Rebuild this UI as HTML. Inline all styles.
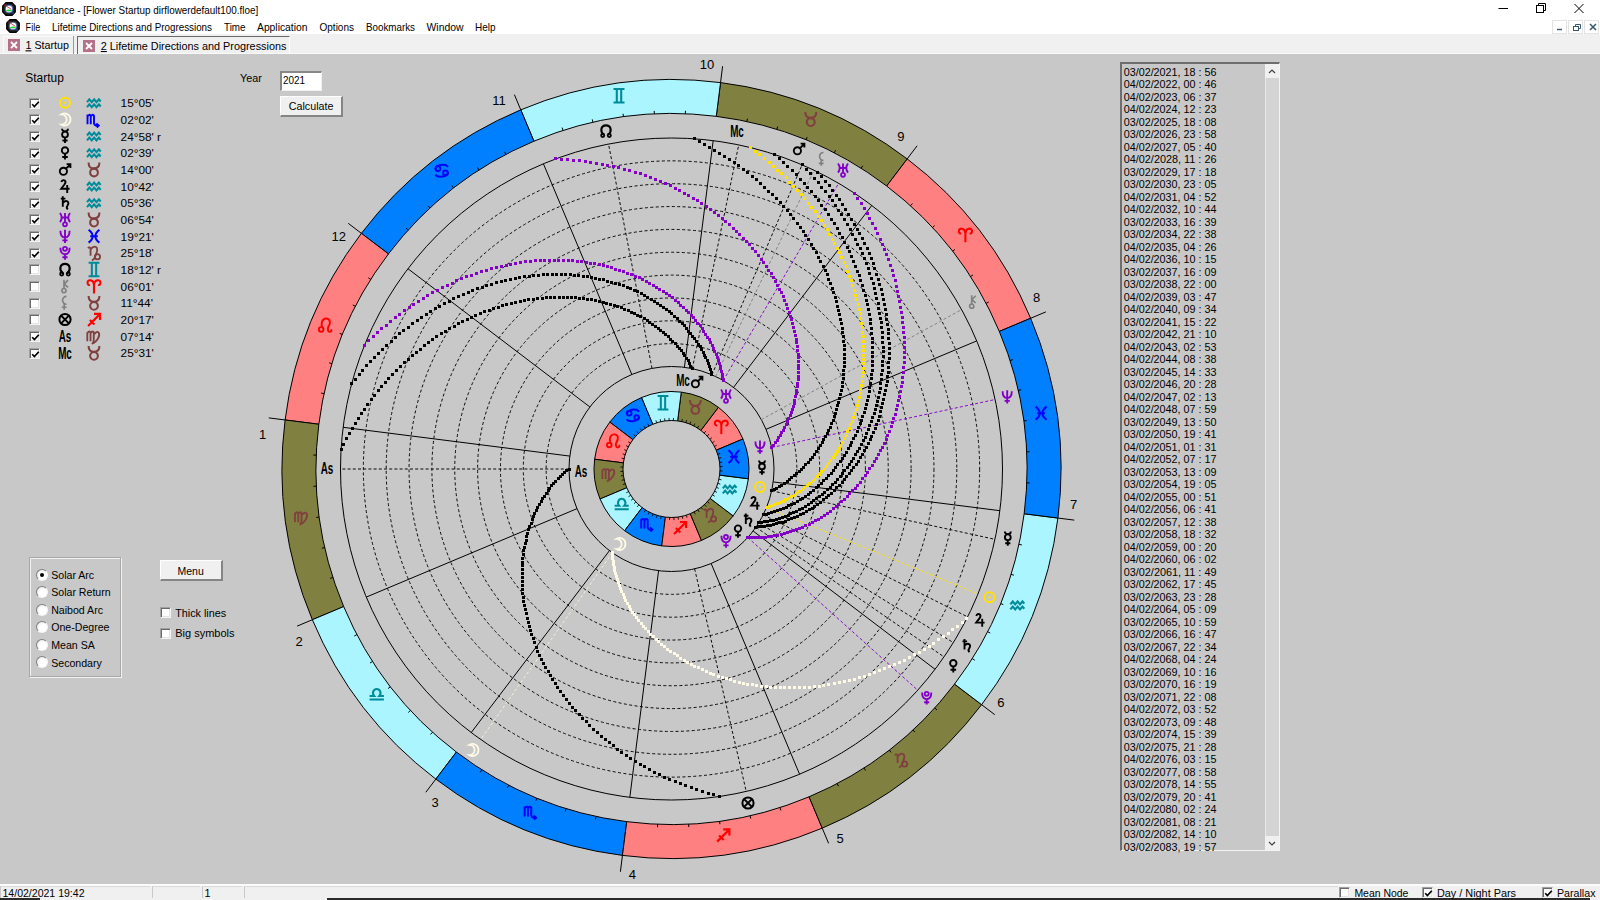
<!DOCTYPE html>
<html><head><meta charset="utf-8"><title>Planetdance</title>
<style>
*{box-sizing:border-box}
html,body{margin:0;padding:0;width:1600px;height:900px;overflow:hidden;background:#c8c8c8;font-family:"Liberation Sans",sans-serif;color:#000}
.abs{position:absolute;white-space:pre}
.cb{position:absolute;width:11px;height:11px;background:#fff;border-top:1px solid #a0a0a0;border-left:1px solid #a0a0a0;border-right:1px solid #f4f4f4;border-bottom:1px solid #f4f4f4;box-shadow:inset 1px 1px 0 #6a6a6a, inset -1px -1px 0 #e3e3e3}
.btn{position:absolute;background:#f0f0f0;border-top:1px solid #fff;border-left:1px solid #fff;border-right:2px solid #858585;border-bottom:2px solid #858585}
.radio{position:absolute;width:12px;height:12px;border-radius:50%;background:radial-gradient(circle at 60% 60%,#fff 0,#fff 40%,#dcdcdc 100%);border-top:1px solid #808080;border-left:1px solid #808080;border-right:1px solid #f8f8f8;border-bottom:1px solid #f8f8f8}
.tabx{position:absolute;width:12px;height:12px;background:#b5708a}
svg text{font-family:"Liberation Sans",sans-serif}
</style></head><body>

<div class="abs" style="left:0;top:0;width:1600px;height:34px;background:#fff"></div>
<div class="abs" style="left:0;top:34px;width:1600px;height:20px;background:#f0f0f0;border-bottom:1px solid #fafafa"></div>
<svg class="abs" style="left:2px;top:2px" width="14" height="14" viewBox="0 0 14 14"><polygon points="4,0.8 10,0.8 13.2,4 13.2,10 10,13.2 4,13.2 0.8,10 0.8,4" fill="#222" stroke="#000" stroke-width="1.4"/><circle cx="7" cy="7" r="3.9" fill="#fff" stroke="#1a4a9a" stroke-width="0.8"/><path d="M3.8,8.6 Q7,6.4 10.2,8.6 Q7,10.6 3.8,8.6 Z" fill="#2bd43b"/><path d="M4.6,4.2 L9.4,7.4" stroke="#d33" stroke-width="0.9"/><circle cx="3" cy="3" r="0.7" fill="#e22"/><circle cx="11" cy="11" r="0.7" fill="#36f"/></svg>
<svg class="abs" style="left:1490px;top:0" width="110" height="17"><path d="M8.5,8.5 H18" stroke="#000" stroke-width="1"/><rect x="46.5" y="5.5" width="7" height="7" fill="none" stroke="#000"/><path d="M48.5,5.5 V3.5 H55.5 V10.5 H53.5" fill="none" stroke="#000"/><path d="M84.5,4 L93.5,13 M93.5,4 L84.5,13" stroke="#000" stroke-width="1"/></svg>
<svg class="abs" style="left:6px;top:19px" width="14" height="14" viewBox="0 0 14 14"><polygon points="4,0.8 10,0.8 13.2,4 13.2,10 10,13.2 4,13.2 0.8,10 0.8,4" fill="#222" stroke="#000" stroke-width="1.4"/><circle cx="7" cy="7" r="3.9" fill="#fff" stroke="#1a4a9a" stroke-width="0.8"/><path d="M3.8,8.6 Q7,6.4 10.2,8.6 Q7,10.6 3.8,8.6 Z" fill="#2bd43b"/><path d="M4.6,4.2 L9.4,7.4" stroke="#d33" stroke-width="0.9"/><circle cx="3" cy="3" r="0.7" fill="#e22"/><circle cx="11" cy="11" r="0.7" fill="#36f"/></svg>
<div class="abs" style="left:1552px;top:20px;width:15px;height:14px;border:1px solid #e3e3e3;background:#fff"></div>
<div class="abs" style="left:1568px;top:20px;width:15px;height:14px;border:1px solid #e3e3e3;background:#fff"></div>
<div class="abs" style="left:1584px;top:20px;width:15px;height:14px;border:1px solid #e3e3e3;background:#fff"></div>
<svg class="abs" style="left:1552px;top:20px" width="48" height="14"><path d="M5,9.5 H10" stroke="#36596e" stroke-width="1.4"/><rect x="21.5" y="6.5" width="5" height="4" fill="none" stroke="#36596e"/><path d="M23.5,6.5 V4.5 H28.5 V8.5 H26.5" fill="none" stroke="#36596e"/><path d="M38,4 L44,10 M44,4 L38,10" stroke="#36596e" stroke-width="1.5"/></svg>
<div class="abs" style="left:3px;top:36px;width:70px;height:17px;border-left:1px solid #fbfbfb;border-top:1px solid #fbfbfb"></div>
<div class="abs" style="left:73px;top:36px;width:1px;height:18px;background:#9a9a9a"></div>
<div class="abs" style="left:77px;top:36px;width:213px;height:18px;border-left:1px solid #6a6a6a;border-top:1px solid #6a6a6a;border-right:1px solid #fff"></div>
<div class="tabx" style="left:8px;top:39px"><svg width="12" height="12" style="position:absolute;left:0;top:0"><path d="M3,3 L9,9 M9,3 L3,9" stroke="#fff" stroke-width="1.8"/></svg></div>
<div class="tabx" style="left:83px;top:40px"><svg width="12" height="12" style="position:absolute;left:0;top:0"><path d="M3,3 L9,9 M9,3 L3,9" stroke="#fff" stroke-width="1.8"/></svg></div>
<div class="cb" style="left:29px;top:98px"><svg width="9" height="9" viewBox="0 0 9 9" style="position:absolute;left:1px;top:1px"><path d="M1.2,4.2 L3.4,6.6 L7.8,1.8" fill="none" stroke="#000" stroke-width="1.7"/></svg></div>
<div class="cb" style="left:29px;top:114px"><svg width="9" height="9" viewBox="0 0 9 9" style="position:absolute;left:1px;top:1px"><path d="M1.2,4.2 L3.4,6.6 L7.8,1.8" fill="none" stroke="#000" stroke-width="1.7"/></svg></div>
<div class="cb" style="left:29px;top:131px"><svg width="9" height="9" viewBox="0 0 9 9" style="position:absolute;left:1px;top:1px"><path d="M1.2,4.2 L3.4,6.6 L7.8,1.8" fill="none" stroke="#000" stroke-width="1.7"/></svg></div>
<div class="cb" style="left:29px;top:148px"><svg width="9" height="9" viewBox="0 0 9 9" style="position:absolute;left:1px;top:1px"><path d="M1.2,4.2 L3.4,6.6 L7.8,1.8" fill="none" stroke="#000" stroke-width="1.7"/></svg></div>
<div class="cb" style="left:29px;top:164px"><svg width="9" height="9" viewBox="0 0 9 9" style="position:absolute;left:1px;top:1px"><path d="M1.2,4.2 L3.4,6.6 L7.8,1.8" fill="none" stroke="#000" stroke-width="1.7"/></svg></div>
<div class="cb" style="left:29px;top:181px"><svg width="9" height="9" viewBox="0 0 9 9" style="position:absolute;left:1px;top:1px"><path d="M1.2,4.2 L3.4,6.6 L7.8,1.8" fill="none" stroke="#000" stroke-width="1.7"/></svg></div>
<div class="cb" style="left:29px;top:198px"><svg width="9" height="9" viewBox="0 0 9 9" style="position:absolute;left:1px;top:1px"><path d="M1.2,4.2 L3.4,6.6 L7.8,1.8" fill="none" stroke="#000" stroke-width="1.7"/></svg></div>
<div class="cb" style="left:29px;top:214px"><svg width="9" height="9" viewBox="0 0 9 9" style="position:absolute;left:1px;top:1px"><path d="M1.2,4.2 L3.4,6.6 L7.8,1.8" fill="none" stroke="#000" stroke-width="1.7"/></svg></div>
<div class="cb" style="left:29px;top:231px"><svg width="9" height="9" viewBox="0 0 9 9" style="position:absolute;left:1px;top:1px"><path d="M1.2,4.2 L3.4,6.6 L7.8,1.8" fill="none" stroke="#000" stroke-width="1.7"/></svg></div>
<div class="cb" style="left:29px;top:248px"><svg width="9" height="9" viewBox="0 0 9 9" style="position:absolute;left:1px;top:1px"><path d="M1.2,4.2 L3.4,6.6 L7.8,1.8" fill="none" stroke="#000" stroke-width="1.7"/></svg></div>
<div class="cb" style="left:29px;top:264px"></div>
<div class="cb" style="left:29px;top:281px"></div>
<div class="cb" style="left:29px;top:298px"></div>
<div class="cb" style="left:29px;top:314px"></div>
<div class="cb" style="left:29px;top:331px"><svg width="9" height="9" viewBox="0 0 9 9" style="position:absolute;left:1px;top:1px"><path d="M1.2,4.2 L3.4,6.6 L7.8,1.8" fill="none" stroke="#000" stroke-width="1.7"/></svg></div>
<div class="cb" style="left:29px;top:348px"><svg width="9" height="9" viewBox="0 0 9 9" style="position:absolute;left:1px;top:1px"><path d="M1.2,4.2 L3.4,6.6 L7.8,1.8" fill="none" stroke="#000" stroke-width="1.7"/></svg></div>
<div class="abs" style="left:280px;top:71px;width:42px;height:20px;background:#fff;border-top:2px solid #888;border-left:2px solid #888;border-right:1px solid #f0f0f0;border-bottom:1px solid #f0f0f0"></div>
<div class="btn" style="left:280px;top:96px;width:63px;height:21px"></div>
<div class="abs" style="left:29px;top:557px;width:92px;height:120px;border:1px solid #a8a8a8;box-shadow:1px 1px 0 #f2f2f2, inset 1px 1px 0 #f2f2f2"></div>
<div class="radio" style="left:35.7px;top:568.7px"></div>
<div class="abs" style="left:39.7px;top:572.7px;width:4px;height:4px;border-radius:50%;background:#000"></div>
<div class="radio" style="left:35.7px;top:586.25px"></div>
<div class="radio" style="left:35.7px;top:603.8px"></div>
<div class="radio" style="left:35.7px;top:621.35px"></div>
<div class="radio" style="left:35.7px;top:638.9px"></div>
<div class="radio" style="left:35.7px;top:656.45px"></div>
<div class="btn" style="left:160px;top:560px;width:63px;height:21px"></div>
<div class="cb" style="left:160px;top:607px"></div>
<div class="cb" style="left:160px;top:628px"></div>
<div class="abs" style="left:1120px;top:62px;width:160px;height:789px;border-top:2px solid #6e6e6e;border-left:2px solid #6e6e6e;border-right:1px solid #f4f4f4;border-bottom:1px solid #f4f4f4;overflow:hidden">
<div style="position:absolute;left:143px;top:0;width:14px;height:786px;background:#d4d4d4;border-left:1px solid #e8e8e8"></div>
<div style="position:absolute;left:143px;top:0;width:14px;height:14px;background:#f0f0f0"></div>
<div style="position:absolute;left:143px;top:772px;width:14px;height:14px;background:#f0f0f0"></div>
<svg style="position:absolute;left:143px;top:0" width="14" height="786"><path d="M4,9 L7,6 L10,9" fill="none" stroke="#404040" stroke-width="1.2"/><path d="M4,778 L7,781 L10,778" fill="none" stroke="#404040" stroke-width="1.2"/></svg>
</div>
<div class="abs" style="left:0;top:884px;width:1600px;height:16px;background:#f0f0f0;border-top:2px solid #fbfbfb"></div>
<div class="abs" style="left:0px;top:886px;width:150px;height:12px;border-left:1px solid #c8c8c8;border-top:1px solid #d8d8d8"></div>
<div class="abs" style="left:152px;top:886px;width:48px;height:12px;border-left:1px solid #c8c8c8;border-top:1px solid #d8d8d8"></div>
<div class="abs" style="left:202px;top:886px;width:40px;height:12px;border-left:1px solid #c8c8c8;border-top:1px solid #d8d8d8"></div>
<div class="abs" style="left:244px;top:886px;width:1094px;height:12px;border-left:1px solid #c8c8c8;border-top:1px solid #d8d8d8"></div>
<div class="cb" style="left:1339px;top:887px"></div>
<div class="cb" style="left:1422px;top:887px"><svg width="9" height="9" viewBox="0 0 9 9" style="position:absolute;left:1px;top:1px"><path d="M1.2,4.2 L3.4,6.6 L7.8,1.8" fill="none" stroke="#000" stroke-width="1.7"/></svg></div>
<div class="cb" style="left:1542px;top:887px"><svg width="9" height="9" viewBox="0 0 9 9" style="position:absolute;left:1px;top:1px"><path d="M1.2,4.2 L3.4,6.6 L7.8,1.8" fill="none" stroke="#000" stroke-width="1.7"/></svg></div>
<div class="abs" style="left:0;top:898px;width:40px;height:2px;background:#2b2b2b"></div>
<div class="abs" style="left:327px;top:898px;width:1263px;height:2px;background:#2b2b2b"></div>
<svg class="abs" style="left:0;top:0" width="1600" height="900" viewBox="0 0 1600 900">
<path d="M1030.65,318.27 A389.5,389.5 0 0 0 907.17,158.89 L886.6,185.96 A355.5,355.5 0 0 1 999.3,331.43 Z" fill="#ff8080" stroke="#000" stroke-width="1"/>
<path d="M907.17,158.89 A389.5,389.5 0 0 0 720.54,82.6 L716.26,116.33 A355.5,355.5 0 0 1 886.6,185.96 Z" fill="#808040" stroke="#000" stroke-width="1"/>
<path d="M720.54,82.6 A389.5,389.5 0 0 0 520.77,109.85 L533.93,141.2 A355.5,355.5 0 0 1 716.26,116.33 Z" fill="#aaf5ff" stroke="#000" stroke-width="1"/>
<path d="M520.77,109.85 A389.5,389.5 0 0 0 361.39,233.33 L388.46,253.9 A355.5,355.5 0 0 1 533.93,141.2 Z" fill="#0080ff" stroke="#000" stroke-width="1"/>
<path d="M361.39,233.33 A389.5,389.5 0 0 0 285.1,419.96 L318.83,424.24 A355.5,355.5 0 0 1 388.46,253.9 Z" fill="#ff8080" stroke="#000" stroke-width="1"/>
<path d="M285.1,419.96 A389.5,389.5 0 0 0 312.35,619.73 L343.7,606.57 A355.5,355.5 0 0 1 318.83,424.24 Z" fill="#808040" stroke="#000" stroke-width="1"/>
<path d="M312.35,619.73 A389.5,389.5 0 0 0 435.83,779.11 L456.4,752.04 A355.5,355.5 0 0 1 343.7,606.57 Z" fill="#aaf5ff" stroke="#000" stroke-width="1"/>
<path d="M435.83,779.11 A389.5,389.5 0 0 0 622.46,855.4 L626.74,821.67 A355.5,355.5 0 0 1 456.4,752.04 Z" fill="#0080ff" stroke="#000" stroke-width="1"/>
<path d="M622.46,855.4 A389.5,389.5 0 0 0 822.23,828.15 L809.07,796.8 A355.5,355.5 0 0 1 626.74,821.67 Z" fill="#ff8080" stroke="#000" stroke-width="1"/>
<path d="M822.23,828.15 A389.5,389.5 0 0 0 981.61,704.67 L954.54,684.1 A355.5,355.5 0 0 1 809.07,796.8 Z" fill="#808040" stroke="#000" stroke-width="1"/>
<path d="M981.61,704.67 A389.5,389.5 0 0 0 1057.9,518.04 L1024.17,513.76 A355.5,355.5 0 0 1 954.54,684.1 Z" fill="#aaf5ff" stroke="#000" stroke-width="1"/>
<path d="M1057.9,518.04 A389.5,389.5 0 0 0 1030.65,318.27 L999.3,331.43 A355.5,355.5 0 0 1 1024.17,513.76 Z" fill="#0080ff" stroke="#000" stroke-width="1"/>
<path d="M986.06,303.38 L988.72,301.98 M970.43,276.6 L972.96,274.97 M952.53,251.27 L954.9,249.44 M932.48,227.61 L934.68,225.57 M910.45,205.78 L912.47,203.56 M861.11,168.29 L862.71,165.75 M834.18,152.91 L835.55,150.24 M806.01,139.93 L807.15,137.15 M776.82,129.46 L777.71,126.59 M746.83,121.57 L747.46,118.64 M685.35,113.77 L685.47,110.77 M654.34,113.91 L654.2,110.92 M623.46,116.76 L623.05,113.79 M592.94,122.29 L592.28,119.36 M563.02,130.45 L562.11,127.6 M505.88,154.44 L504.48,151.78 M479.1,170.07 L477.47,167.54 M453.77,187.97 L451.94,185.6 M430.11,208.02 L428.07,205.82 M408.28,230.05 L406.06,228.03 M370.79,279.39 L368.25,277.79 M355.41,306.32 L352.74,304.95 M342.43,334.49 L339.65,333.35 M331.96,363.68 L329.09,362.79 M324.07,393.67 L321.14,393.04 M316.27,455.15 L313.27,455.03 M316.41,486.16 L313.42,486.3 M319.26,517.04 L316.29,517.45 M324.79,547.56 L321.86,548.22 M332.95,577.48 L330.1,578.39 M356.94,634.62 L354.28,636.02 M372.57,661.4 L370.04,663.03 M390.47,686.73 L388.1,688.56 M410.52,710.39 L408.32,712.43 M432.55,732.22 L430.53,734.44 M481.89,769.71 L480.29,772.25 M508.82,785.09 L507.45,787.76 M536.99,798.07 L535.85,800.85 M566.18,808.54 L565.29,811.41 M596.17,816.43 L595.54,819.36 M657.65,824.23 L657.53,827.23 M688.66,824.09 L688.8,827.08 M719.54,821.24 L719.95,824.21 M750.06,815.71 L750.72,818.64 M779.98,807.55 L780.89,810.4 M837.12,783.56 L838.52,786.22 M863.9,767.93 L865.53,770.46 M889.23,750.03 L891.06,752.4 M912.89,729.98 L914.93,732.18 M934.72,707.95 L936.94,709.97 M972.21,658.61 L974.75,660.21 M987.59,631.68 L990.26,633.05 M1000.57,603.51 L1003.35,604.65 M1011.04,574.32 L1013.91,575.21 M1018.93,544.33 L1021.86,544.96 M1026.73,482.85 L1029.73,482.97 M1026.59,451.84 L1029.58,451.7 M1023.74,420.96 L1026.71,420.55 M1018.21,390.44 L1021.14,389.78 M1010.05,360.52 L1012.9,359.61" stroke="#000" stroke-width="1"/>
<g transform="translate(965.4,234.7) scale(1.1)" color="#ff0000"><path d="M0,-1.5 C-0.4,-6.2 -6,-6.8 -6,-3.2 C-6,-1.6 -4.8,-0.8 -3.8,-1.2 M0,-1.5 C0.4,-6.2 6,-6.8 6,-3.2 C6,-1.6 4.8,-0.8 3.8,-1.2 M0,-1.5 V6.8" fill="none" stroke="currentColor" stroke-width="1.9"/></g>
<g transform="translate(810.75,119) scale(1.1)" color="#804040"><circle cy="2.8" r="3.6" fill="none" stroke="currentColor" stroke-width="1.9"/><path d="M-5,-6.4 C-5,-2.4 -3.2,-1 0,-1 C3.2,-1 5,-2.4 5,-6.4" fill="none" stroke="currentColor" stroke-width="1.9"/></g>
<g transform="translate(619,95.75) scale(1.1)" color="#008b9b"><path d="M-5,-6.2 H5 M-5,6.2 H5 M-2,-6 V6 M2,-6 V6" fill="none" stroke="currentColor" stroke-width="1.89"/></g>
<g transform="translate(441.7,170.8) scale(1.1)" color="#0000ff"><path d="M-5.8,-1.2 C-5.4,-5.8 3.2,-6.6 5.8,-3.6 M5.8,1.2 C5.4,5.8 -3.2,6.6 -5.8,3.6" fill="none" stroke="currentColor" stroke-width="1.77"/><circle cx="-3.4" cy="-1.9" r="2.1" fill="none" stroke="currentColor" stroke-width="1.77"/><circle cx="3.4" cy="1.9" r="2.1" fill="none" stroke="currentColor" stroke-width="1.77"/></g>
<g transform="translate(325.1,325.7) scale(1.1)" color="#ff0000"><circle cx="-3.6" cy="3.4" r="2.1" fill="none" stroke="currentColor" stroke-width="1.77"/><path d="M-2.2,1.8 C-4.5,-2 -2.5,-6.5 1,-6.5 C4.5,-6.5 5.5,-3 3,1 C2,3 2.5,5.8 4.5,5.6 C5.8,5.4 6,4.2 5.4,3.4" fill="none" stroke="currentColor" stroke-width="1.77"/></g>
<g transform="translate(301.75,517) scale(1.1)" color="#804040"><path d="M-6.2,-3.6 V4.8 M-6.2,-2.6 Q-4.8,-5.4 -3.2,-3.6 V4.8 M-3.2,-2.6 Q-1.8,-5.4 -0.2,-3.6 V3.4 Q-0.2,6.2 -2,7.2 M-0.2,-1.4 Q2.6,-5.4 4.4,-3.2 Q5.6,-1 3.6,2.4 Q2,5 -0.6,6.4" fill="none" stroke="currentColor" stroke-width="1.7"/></g>
<g transform="translate(376.75,694) scale(1.1)" color="#008b9b"><path d="M-6.5,5 H6.5 M-6.5,1.8 H-2.4 C-4.6,-0.6 -3,-4.6 0,-4.6 C3,-4.6 4.6,-0.6 2.4,1.8 H6.5" fill="none" stroke="currentColor" stroke-width="1.89"/></g>
<g transform="translate(531.25,811.5) scale(1.1)" color="#0000ff"><path d="M-6,-4.5 V4.5 M-6,-2.6 Q-4.5,-5.6 -3,-3.4 V4.5 M-3,-2.6 Q-1.5,-5.6 0,-3.4 V3.5 Q0.4,6 3.6,5.6 M2.2,3.6 L4.4,5.6 L2.6,7.4" fill="none" stroke="currentColor" stroke-width="1.77"/></g>
<g transform="translate(723.25,835) scale(1.1)" color="#ff0000"><path d="M-5.5,6 L5.5,-5 M0,-5.2 H5.6 V0.4 M-3.8,0.4 L0.4,4.6" fill="none" stroke="currentColor" stroke-width="2.01"/></g>
<g transform="translate(901.1,760) scale(1.1)" color="#804040"><path d="M-5.6,-4.2 Q-4.4,-6 -3.2,-4.2 V2.8 M-3.2,-3 Q-1,-6.4 1.6,-5.6 Q3.6,-4.8 2.6,-0.8 L0.8,4.2 Q0,6.4 -2,6.9" fill="none" stroke="currentColor" stroke-width="1.7"/><circle cx="3.2" cy="3.6" r="2.4" fill="none" stroke="currentColor" stroke-width="1.7"/></g>
<g transform="translate(1017.5,605) scale(1.1)" color="#008b9b"><path d="M-6.5,-0.6 l2.2,-2.6 l2.2,2.6 l2.2,-2.6 l2.2,2.6 l2.2,-2.6 l1.7,2 M-6.5,4 l2.2,-2.6 l2.2,2.6 l2.2,-2.6 l2.2,2.6 l2.2,-2.6 l1.7,2" fill="none" stroke="currentColor" stroke-width="1.89"/></g>
<g transform="translate(1041.1,413.2) scale(1.1)" color="#0000ff"><path d="M-5,-6 Q2.6,0 -5,6 M5,-6 Q-2.6,0 5,6 M-3.5,0 H3.5" fill="none" stroke="currentColor" stroke-width="1.89"/></g>
<text x="262.7" y="438.5" font-size="13" text-anchor="middle" fill="#000">1</text>
<text x="299.2" y="645.6" font-size="13" text-anchor="middle" fill="#000">2</text>
<text x="435.2" y="806.9" font-size="13" text-anchor="middle" fill="#000">3</text>
<text x="632.3" y="879" font-size="13" text-anchor="middle" fill="#000">4</text>
<text x="840.2" y="842.5" font-size="13" text-anchor="middle" fill="#000">5</text>
<text x="1000.8" y="706.6" font-size="13" text-anchor="middle" fill="#000">6</text>
<text x="1073.5" y="509" font-size="13" text-anchor="middle" fill="#000">7</text>
<text x="1036.6" y="301.5" font-size="13" text-anchor="middle" fill="#000">8</text>
<text x="900.8" y="140.6" font-size="13" text-anchor="middle" fill="#000">9</text>
<text x="707.1" y="68.6" font-size="13" text-anchor="middle" fill="#000">10</text>
<text x="499" y="104.9" font-size="13" text-anchor="middle" fill="#000">11</text>
<text x="338.7" y="240.8" font-size="13" text-anchor="middle" fill="#000">12</text>
<path d="M285.1,419.96 L268.73,417.88 M312.35,619.73 L297.13,626.11 M435.83,779.11 L425.84,792.25 M622.46,855.4 L620.38,871.77 M822.23,828.15 L828.61,843.37 M981.61,704.67 L994.75,714.66 M1057.9,518.04 L1074.27,520.12 M1030.65,318.27 L1045.87,311.89 M907.17,158.89 L917.16,145.75 M720.54,82.6 L722.62,66.23 M520.77,109.85 L514.39,94.63 M361.39,233.33 L348.25,223.34" stroke="#000" stroke-width="1"/>
<circle cx="671.5" cy="469.0" r="331.0" fill="none" stroke="#000" stroke-width="1"/>
<circle cx="671.5" cy="469.0" r="102.5" fill="none" stroke="#000" stroke-width="1"/>
<circle cx="671.5" cy="469.0" r="125.35" fill="none" stroke="#000" stroke-width="0.95" stroke-dasharray="3,2.4"/>
<circle cx="671.5" cy="469.0" r="148.2" fill="none" stroke="#000" stroke-width="0.95" stroke-dasharray="3,2.4"/>
<circle cx="671.5" cy="469.0" r="171.05" fill="none" stroke="#000" stroke-width="0.95" stroke-dasharray="3,2.4"/>
<circle cx="671.5" cy="469.0" r="193.9" fill="none" stroke="#000" stroke-width="0.95" stroke-dasharray="3,2.4"/>
<circle cx="671.5" cy="469.0" r="216.75" fill="none" stroke="#000" stroke-width="0.95" stroke-dasharray="3,2.4"/>
<circle cx="671.5" cy="469.0" r="239.6" fill="none" stroke="#000" stroke-width="0.95" stroke-dasharray="3,2.4"/>
<circle cx="671.5" cy="469.0" r="262.45" fill="none" stroke="#000" stroke-width="0.95" stroke-dasharray="3,2.4"/>
<circle cx="671.5" cy="469.0" r="285.3" fill="none" stroke="#000" stroke-width="0.95" stroke-dasharray="3,2.4"/>
<circle cx="671.5" cy="469.0" r="308.15" fill="none" stroke="#000" stroke-width="0.95" stroke-dasharray="3,2.4"/>
<path d="M766.01,429.33 L976.71,340.91 M733.52,387.39 L871.78,205.46 M684.41,367.32 L713.18,140.63 M631.83,374.49 L543.41,163.79 M589.89,406.98 L407.96,268.72 M569.82,456.09 L343.13,427.32 M576.99,508.67 L366.29,597.09 M609.48,550.61 L471.22,732.54 M658.59,570.68 L629.82,797.37 M711.17,563.51 L799.59,774.21 M753.11,531.02 L935.04,669.28 M773.18,481.91 L999.87,510.68" stroke="#000" stroke-width="1"/>
<path d="M766.44,507.65 L978.07,593.8" stroke="#ffe000" stroke-width="0.95" stroke-dasharray="3,2.2"/>
<path d="M612.42,552.76 L480.7,739.48" stroke="#f4efd8" stroke-width="0.95" stroke-dasharray="3,2.2"/>
<path d="M771.66,490.78 L994.94,539.32" stroke="#000000" stroke-width="0.95" stroke-dasharray="3,2.2"/>
<path d="M755.89,527.18 L944.01,656.88" stroke="#000000" stroke-width="0.95" stroke-dasharray="3,2.2"/>
<path d="M711.93,374.81 L802.07,164.84" stroke="#000000" stroke-width="0.95" stroke-dasharray="3,2.2"/>
<path d="M763.2,514.79 L967.64,616.86" stroke="#000000" stroke-width="0.95" stroke-dasharray="3,2.2"/>
<path d="M758.77,522.76 L953.32,642.6" stroke="#000000" stroke-width="0.95" stroke-dasharray="3,2.2"/>
<path d="M723.27,380.53 L838.66,183.31" stroke="#8400c8" stroke-width="0.95" stroke-dasharray="3,2.2"/>
<path d="M771.72,447.48 L995.13,399.52" stroke="#8400c8" stroke-width="0.95" stroke-dasharray="3,2.2"/>
<path d="M747.75,537.5 L917.74,690.2" stroke="#8400c8" stroke-width="0.95" stroke-dasharray="3,2.2"/>
<path d="M652,368.37 L608.53,144.04" stroke="#000000" stroke-width="0.95" stroke-dasharray="3,2.2"/>
<path d="M761.34,419.65 L961.6,309.62" stroke="#808080" stroke-width="0.95" stroke-dasharray="3,2.2"/>
<path d="M715.63,376.48 L814,170.24" stroke="#808080" stroke-width="0.95" stroke-dasharray="3,2.2"/>
<path d="M694.64,568.85 L746.24,791.45" stroke="#000000" stroke-width="0.95" stroke-dasharray="3,2.2"/>
<path d="M569,469 L340.5,469" stroke="#000000" stroke-width="0.95" stroke-dasharray="3,2.2"/>
<path d="M692.31,368.64 L738.72,144.9" stroke="#000000" stroke-width="0.95" stroke-dasharray="3,2.2"/>
<path d="M742.96,439.01 A77.5,77.5 0 0 0 718.39,407.3 L700.85,430.39 A48.5,48.5 0 0 1 716.22,450.23 Z" fill="#ff8080" stroke="#000" stroke-width="1"/>
<g transform="translate(721.3,426.62) scale(1.08)" color="#ff0000"><path d="M0,-1.5 C-0.4,-6.2 -6,-6.8 -6,-3.2 C-6,-1.6 -4.8,-0.8 -3.8,-1.2 M0,-1.5 C0.4,-6.2 6,-6.8 6,-3.2 C6,-1.6 4.8,-0.8 3.8,-1.2 M0,-1.5 V6.8" fill="none" stroke="currentColor" stroke-width="1.9"/></g>
<path d="M718.39,407.3 A77.5,77.5 0 0 0 681.26,392.12 L677.61,420.89 A48.5,48.5 0 0 1 700.85,430.39 Z" fill="#808040" stroke="#000" stroke-width="1"/>
<g transform="translate(695.34,406.88) scale(1.08)" color="#804040"><circle cy="2.8" r="3.6" fill="none" stroke="currentColor" stroke-width="1.9"/><path d="M-5,-6.4 C-5,-2.4 -3.2,-1 0,-1 C3.2,-1 5,-2.4 5,-6.4" fill="none" stroke="currentColor" stroke-width="1.9"/></g>
<path d="M681.26,392.12 A77.5,77.5 0 0 0 641.51,397.54 L652.73,424.28 A48.5,48.5 0 0 1 677.61,420.89 Z" fill="#aaf5ff" stroke="#000" stroke-width="1"/>
<g transform="translate(662.99,402.78) scale(1.08)" color="#008b9b"><path d="M-5,-6.2 H5 M-5,6.2 H5 M-2,-6 V6 M2,-6 V6" fill="none" stroke="currentColor" stroke-width="1.89"/></g>
<path d="M641.51,397.54 A77.5,77.5 0 0 0 609.8,422.11 L632.89,439.65 A48.5,48.5 0 0 1 652.73,424.28 Z" fill="#0080ff" stroke="#000" stroke-width="1"/>
<g transform="translate(632.92,415.4) scale(1.08)" color="#0000ff"><path d="M-5.8,-1.2 C-5.4,-5.8 3.2,-6.6 5.8,-3.6 M5.8,1.2 C5.4,5.8 -3.2,6.6 -5.8,3.6" fill="none" stroke="currentColor" stroke-width="1.77"/><circle cx="-3.4" cy="-1.9" r="2.1" fill="none" stroke="currentColor" stroke-width="1.77"/><circle cx="3.4" cy="1.9" r="2.1" fill="none" stroke="currentColor" stroke-width="1.77"/></g>
<path d="M609.8,422.11 A77.5,77.5 0 0 0 594.62,459.24 L623.39,462.89 A48.5,48.5 0 0 1 632.89,439.65 Z" fill="#ff8080" stroke="#000" stroke-width="1"/>
<g transform="translate(613.18,441.36) scale(1.08)" color="#ff0000"><circle cx="-3.6" cy="3.4" r="2.1" fill="none" stroke="currentColor" stroke-width="1.77"/><path d="M-2.2,1.8 C-4.5,-2 -2.5,-6.5 1,-6.5 C4.5,-6.5 5.5,-3 3,1 C2,3 2.5,5.8 4.5,5.6 C5.8,5.4 6,4.2 5.4,3.4" fill="none" stroke="currentColor" stroke-width="1.77"/></g>
<path d="M594.62,459.24 A77.5,77.5 0 0 0 600.04,498.99 L626.78,487.77 A48.5,48.5 0 0 1 623.39,462.89 Z" fill="#808040" stroke="#000" stroke-width="1"/>
<g transform="translate(609.08,473.71) scale(1.08)" color="#804040"><path d="M-6.2,-3.6 V4.8 M-6.2,-2.6 Q-4.8,-5.4 -3.2,-3.6 V4.8 M-3.2,-2.6 Q-1.8,-5.4 -0.2,-3.6 V3.4 Q-0.2,6.2 -2,7.2 M-0.2,-1.4 Q2.6,-5.4 4.4,-3.2 Q5.6,-1 3.6,2.4 Q2,5 -0.6,6.4" fill="none" stroke="currentColor" stroke-width="1.7"/></g>
<path d="M600.04,498.99 A77.5,77.5 0 0 0 624.61,530.7 L642.15,507.61 A48.5,48.5 0 0 1 626.78,487.77 Z" fill="#aaf5ff" stroke="#000" stroke-width="1"/>
<g transform="translate(621.7,503.78) scale(1.08)" color="#008b9b"><path d="M-6.5,5 H6.5 M-6.5,1.8 H-2.4 C-4.6,-0.6 -3,-4.6 0,-4.6 C3,-4.6 4.6,-0.6 2.4,1.8 H6.5" fill="none" stroke="currentColor" stroke-width="1.89"/></g>
<path d="M624.61,530.7 A77.5,77.5 0 0 0 661.74,545.88 L665.39,517.11 A48.5,48.5 0 0 1 642.15,507.61 Z" fill="#0080ff" stroke="#000" stroke-width="1"/>
<g transform="translate(647.66,523.52) scale(1.08)" color="#0000ff"><path d="M-6,-4.5 V4.5 M-6,-2.6 Q-4.5,-5.6 -3,-3.4 V4.5 M-3,-2.6 Q-1.5,-5.6 0,-3.4 V3.5 Q0.4,6 3.6,5.6 M2.2,3.6 L4.4,5.6 L2.6,7.4" fill="none" stroke="currentColor" stroke-width="1.77"/></g>
<path d="M661.74,545.88 A77.5,77.5 0 0 0 701.49,540.46 L690.27,513.72 A48.5,48.5 0 0 1 665.39,517.11 Z" fill="#ff8080" stroke="#000" stroke-width="1"/>
<g transform="translate(680.01,527.62) scale(1.08)" color="#ff0000"><path d="M-5.5,6 L5.5,-5 M0,-5.2 H5.6 V0.4 M-3.8,0.4 L0.4,4.6" fill="none" stroke="currentColor" stroke-width="2.01"/></g>
<path d="M701.49,540.46 A77.5,77.5 0 0 0 733.2,515.89 L710.11,498.35 A48.5,48.5 0 0 1 690.27,513.72 Z" fill="#808040" stroke="#000" stroke-width="1"/>
<g transform="translate(710.08,515) scale(1.08)" color="#804040"><path d="M-5.6,-4.2 Q-4.4,-6 -3.2,-4.2 V2.8 M-3.2,-3 Q-1,-6.4 1.6,-5.6 Q3.6,-4.8 2.6,-0.8 L0.8,4.2 Q0,6.4 -2,6.9" fill="none" stroke="currentColor" stroke-width="1.7"/><circle cx="3.2" cy="3.6" r="2.4" fill="none" stroke="currentColor" stroke-width="1.7"/></g>
<path d="M733.2,515.89 A77.5,77.5 0 0 0 748.38,478.76 L719.61,475.11 A48.5,48.5 0 0 1 710.11,498.35 Z" fill="#aaf5ff" stroke="#000" stroke-width="1"/>
<g transform="translate(729.82,489.04) scale(1.08)" color="#008b9b"><path d="M-6.5,-0.6 l2.2,-2.6 l2.2,2.6 l2.2,-2.6 l2.2,2.6 l2.2,-2.6 l1.7,2 M-6.5,4 l2.2,-2.6 l2.2,2.6 l2.2,-2.6 l2.2,2.6 l2.2,-2.6 l1.7,2" fill="none" stroke="currentColor" stroke-width="1.89"/></g>
<path d="M748.38,478.76 A77.5,77.5 0 0 0 742.96,439.01 L716.22,450.23 A48.5,48.5 0 0 1 719.61,475.11 Z" fill="#0080ff" stroke="#000" stroke-width="1"/>
<g transform="translate(733.92,456.69) scale(1.08)" color="#0000ff"><path d="M-5,-6 Q2.6,0 -5,6 M5,-6 Q-2.6,0 5,6 M-3.5,0 H3.5" fill="none" stroke="currentColor" stroke-width="1.89"/></g>
<path d="M714.42,446.41 L716.72,445.19 M712.28,442.75 L714.47,441.34 M709.84,439.3 L711.9,437.7 M707.11,436.07 L709.01,434.3 M704.1,433.09 L705.85,431.16 M697.37,427.97 L698.76,425.78 M693.69,425.88 L694.88,423.56 M689.85,424.11 L690.84,421.7 M685.87,422.68 L686.64,420.19 M681.78,421.6 L682.33,419.06 M673.39,420.54 L673.49,417.94 M669.16,420.56 L669.03,417.96 M664.95,420.94 L664.59,418.37 M660.78,421.7 L660.21,419.16 M656.7,422.81 L655.91,420.34 M648.91,426.08 L647.69,423.78 M645.25,428.22 L643.84,426.03 M641.8,430.66 L640.2,428.6 M638.57,433.39 L636.8,431.49 M635.59,436.4 L633.66,434.65 M630.47,443.13 L628.28,441.74 M628.38,446.81 L626.06,445.62 M626.61,450.65 L624.2,449.66 M625.18,454.63 L622.69,453.86 M624.1,458.72 L621.56,458.17 M623.04,467.11 L620.44,467.01 M623.06,471.34 L620.46,471.47 M623.44,475.55 L620.87,475.91 M624.2,479.72 L621.66,480.29 M625.31,483.8 L622.84,484.59 M628.58,491.59 L626.28,492.81 M630.72,495.25 L628.53,496.66 M633.16,498.7 L631.1,500.3 M635.89,501.93 L633.99,503.7 M638.9,504.91 L637.15,506.84 M645.63,510.03 L644.24,512.22 M649.31,512.12 L648.12,514.44 M653.15,513.89 L652.16,516.3 M657.13,515.32 L656.36,517.81 M661.22,516.4 L660.67,518.94 M669.61,517.46 L669.51,520.06 M673.84,517.44 L673.97,520.04 M678.05,517.06 L678.41,519.63 M682.22,516.3 L682.79,518.84 M686.3,515.19 L687.09,517.66 M694.09,511.92 L695.31,514.22 M697.75,509.78 L699.16,511.97 M701.2,507.34 L702.8,509.4 M704.43,504.61 L706.2,506.51 M707.41,501.6 L709.34,503.35 M712.53,494.87 L714.72,496.26 M714.62,491.19 L716.94,492.38 M716.39,487.35 L718.8,488.34 M717.82,483.37 L720.31,484.14 M718.9,479.28 L721.44,479.83 M719.96,470.89 L722.56,470.99 M719.94,466.66 L722.54,466.53 M719.56,462.45 L722.13,462.09 M718.8,458.28 L721.34,457.71 M717.69,454.2 L720.16,453.41" stroke="#000" stroke-width="0.85"/>
<g transform="translate(989.6,597.3)" color="#ffe000"><circle r="5" fill="none" stroke="currentColor" stroke-width="2.01"/><circle r="1.2" fill="currentColor"/></g>
<g transform="translate(473,750)" color="#fffae6"><path d="M-3.5,-5.2 A6,6 0 1 1 -3.5,5.2 A4.6,4.6 0 0 0 -3.5,-5.2 Z" fill="none" stroke="currentColor" stroke-width="1.77"/></g>
<g transform="translate(1007.8,538.9)" color="#000000"><path d="M-3,-7.4 A3,2.6 0 0 0 3,-7.4 M0,1.3 V6.8 M-2.6,4.3 H2.6" fill="none" stroke="currentColor" stroke-width="1.89"/><circle cy="-1.6" r="2.9" fill="none" stroke="currentColor" stroke-width="1.89"/></g>
<g transform="translate(953.3,665.6)" color="#000000"><circle cy="-2.4" r="3.2" fill="none" stroke="currentColor" stroke-width="1.89"/><path d="M0,0.8 V6.8 M-2.8,4.2 H2.8" fill="none" stroke="currentColor" stroke-width="1.89"/></g>
<g transform="translate(799,149)" color="#000000"><circle cx="-1.6" cy="1.8" r="3.6" fill="none" stroke="currentColor" stroke-width="1.89"/><path d="M1,-0.8 L5.2,-5 M1.6,-5.4 H5.4 V-1.6" fill="none" stroke="currentColor" stroke-width="1.89"/></g>
<g transform="translate(980,620)" color="#000000"><path d="M-3.8,-4.2 Q-2.5,-6.8 -0.2,-5.6 Q1.4,-4.4 -0.6,-1.6 L-3.8,2.6 H4.6 M2.2,-1.2 V6.8" fill="none" stroke="currentColor" stroke-width="1.89"/></g>
<g transform="translate(966.7,645.6)" color="#000000"><path d="M-2.2,-6.5 V4 M-4.2,-4.2 H0.4 M-2.2,0 Q0.5,-3 2.8,-1.2 Q4.2,0.5 2.4,3 Q1,4.8 2.8,6.6" fill="none" stroke="currentColor" stroke-width="1.89"/></g>
<g transform="translate(843,170)" color="#8400c8"><path d="M-5,-6.5 Q-1.6,-2 -5,2.6 M5,-6.5 Q1.6,-2 5,2.6 M-3.2,-2 H3.2 M0,-6.5 V2.8" fill="none" stroke="currentColor" stroke-width="1.89"/><circle cy="4.8" r="2" fill="none" stroke="currentColor" stroke-width="1.77"/></g>
<g transform="translate(1007.2,396.7)" color="#8400c8"><path d="M-4.6,-5.5 Q-4.6,1.2 0,1.2 Q4.6,1.2 4.6,-5.5 M0,-6.5 V6.8 M-2.6,4.2 H2.6" fill="none" stroke="currentColor" stroke-width="1.89"/></g>
<g transform="translate(926.7,697.8)" color="#8400c8"><circle cy="-4" r="2" fill="none" stroke="currentColor" stroke-width="1.77"/><path d="M-4.6,-5.2 Q-4.6,1.4 0,1.4 Q4.6,1.4 4.6,-5.2 M0,1.4 V6.8 M-2.6,4.4 H2.6" fill="none" stroke="currentColor" stroke-width="1.89"/></g>
<g transform="translate(606,131)" color="#000000"><path d="M-2.2,3.6 C-6,1 -5.5,-5.6 0,-5.6 C5.5,-5.6 6,1 2.2,3.6" fill="none" stroke="currentColor" stroke-width="2.12"/><circle cx="-3.3" cy="4.6" r="1.6" fill="none" stroke="currentColor" stroke-width="1.77"/><circle cx="3.3" cy="4.6" r="1.6" fill="none" stroke="currentColor" stroke-width="1.77"/></g>
<g transform="translate(972.7,301.8)" color="#808080"><path d="M-1,-6.5 V2.2 M-1,-1.8 L3,-6 M-0.6,-2 L3,1.2" fill="none" stroke="currentColor" stroke-width="1.65"/><circle cx="-1" cy="4.4" r="2.1" fill="none" stroke="currentColor" stroke-width="1.65"/></g>
<g transform="translate(822,159)" color="#808080"><path d="M1.5,-6.5 A3.8,3.8 0 1 0 1.5,1.4 A2.8,2.8 0 0 1 1.5,-6.5 M-0.8,1.2 V6.8 M-3.2,4.4 H1.6" fill="none" stroke="currentColor" stroke-width="1.65"/></g>
<g transform="translate(748,803)" color="#000000"><circle r="5.6" fill="none" stroke="currentColor" stroke-width="2.01"/><path d="M-3.9,-3.9 L3.9,3.9 M3.9,-3.9 L-3.9,3.9" stroke="currentColor" stroke-width="2.01"/></g>
<text x="0" y="0" font-size="17.0" font-weight="bold" text-anchor="middle" transform="translate(327,474.2) scale(0.58,1)" fill="#000">As</text>
<text x="0" y="0" font-size="17.0" font-weight="bold" text-anchor="middle" transform="translate(737,137.2) scale(0.58,1)" fill="#000">Mc</text>
<text x="0" y="0" font-size="17.0" font-weight="bold" text-anchor="middle" transform="translate(683,386.2) scale(0.58,1)" fill="#000">Mc</text>
<g transform="translate(697,382)" color="#000000"><circle cx="-1.6" cy="1.8" r="3.6" fill="none" stroke="currentColor" stroke-width="1.89"/><path d="M1,-0.8 L5.2,-5 M1.6,-5.4 H5.4 V-1.6" fill="none" stroke="currentColor" stroke-width="1.89"/></g>
<g transform="translate(726,396)" color="#8400c8"><path d="M-5,-6.5 Q-1.6,-2 -5,2.6 M5,-6.5 Q1.6,-2 5,2.6 M-3.2,-2 H3.2 M0,-6.5 V2.8" fill="none" stroke="currentColor" stroke-width="1.89"/><circle cy="4.8" r="2" fill="none" stroke="currentColor" stroke-width="1.77"/></g>
<g transform="translate(760,447)" color="#8400c8"><path d="M-4.6,-5.5 Q-4.6,1.2 0,1.2 Q4.6,1.2 4.6,-5.5 M0,-6.5 V6.8 M-2.6,4.2 H2.6" fill="none" stroke="currentColor" stroke-width="1.89"/></g>
<g transform="translate(762,468)" color="#000000"><path d="M-3,-7.4 A3,2.6 0 0 0 3,-7.4 M0,1.3 V6.8 M-2.6,4.3 H2.6" fill="none" stroke="currentColor" stroke-width="1.89"/><circle cy="-1.6" r="2.9" fill="none" stroke="currentColor" stroke-width="1.89"/></g>
<g transform="translate(760,487)" color="#ffe000"><circle r="5" fill="none" stroke="currentColor" stroke-width="2.01"/><circle r="1.2" fill="currentColor"/></g>
<g transform="translate(755,503)" color="#000000"><path d="M-3.8,-4.2 Q-2.5,-6.8 -0.2,-5.6 Q1.4,-4.4 -0.6,-1.6 L-3.8,2.6 H4.6 M2.2,-1.2 V6.8" fill="none" stroke="currentColor" stroke-width="1.89"/></g>
<g transform="translate(748,520)" color="#000000"><path d="M-2.2,-6.5 V4 M-4.2,-4.2 H0.4 M-2.2,0 Q0.5,-3 2.8,-1.2 Q4.2,0.5 2.4,3 Q1,4.8 2.8,6.6" fill="none" stroke="currentColor" stroke-width="1.89"/></g>
<g transform="translate(738,531)" color="#000000"><circle cy="-2.4" r="3.2" fill="none" stroke="currentColor" stroke-width="1.89"/><path d="M0,0.8 V6.8 M-2.8,4.2 H2.8" fill="none" stroke="currentColor" stroke-width="1.89"/></g>
<g transform="translate(726,541)" color="#8400c8"><circle cy="-4" r="2" fill="none" stroke="currentColor" stroke-width="1.77"/><path d="M-4.6,-5.2 Q-4.6,1.4 0,1.4 Q4.6,1.4 4.6,-5.2 M0,1.4 V6.8 M-2.6,4.4 H2.6" fill="none" stroke="currentColor" stroke-width="1.89"/></g>
<g transform="translate(620,544)" color="#fffae6"><path d="M-3.5,-5.2 A6,6 0 1 1 -3.5,5.2 A4.6,4.6 0 0 0 -3.5,-5.2 Z" fill="none" stroke="currentColor" stroke-width="1.77"/></g>
<text x="0" y="0" font-size="17.0" font-weight="bold" text-anchor="middle" transform="translate(581,477.2) scale(0.58,1)" fill="#000">As</text>
<path d="M764.94,506.15h3v3h-3zM767.73,505.3h3v3h-3zM770.53,504.36h3v3h-3zM773.32,503.34h3v3h-3zM776.1,502.23h3v3h-3zM778.88,501.03h3v3h-3zM781.64,499.75h3v3h-3zM784.4,498.38h3v3h-3zM787.14,496.93h3v3h-3zM789.86,495.39h3v3h-3zM792.57,493.77h3v3h-3zM795.25,492.05h3v3h-3zM797.91,490.26h3v3h-3zM800.55,488.38h3v3h-3zM803.15,486.41h3v3h-3zM805.73,484.36h3v3h-3zM808.28,482.23h3v3h-3zM810.79,480.01h3v3h-3zM813.27,477.72h3v3h-3zM815.7,475.34h3v3h-3zM818.1,472.88h3v3h-3zM820.46,470.34h3v3h-3zM822.77,467.72h3v3h-3zM825.04,465.02h3v3h-3zM827.25,462.24h3v3h-3zM829.42,459.39h3v3h-3zM831.53,456.46h3v3h-3zM833.59,453.46h3v3h-3zM835.6,450.38h3v3h-3zM837.54,447.23h3v3h-3zM839.43,444.01h3v3h-3zM841.25,440.72h3v3h-3zM843.01,437.36h3v3h-3zM844.71,433.94h3v3h-3zM846.34,430.44h3v3h-3zM847.9,426.89h3v3h-3zM849.39,423.27h3v3h-3zM850.8,419.58h3v3h-3zM852.15,415.84h3v3h-3zM853.41,412.04h3v3h-3zM854.6,408.18h3v3h-3zM855.71,404.26h3v3h-3zM856.75,400.3h3v3h-3zM857.7,396.27h3v3h-3zM858.56,392.2h3v3h-3zM859.34,388.08h3v3h-3zM860.04,383.91h3v3h-3zM860.65,379.7h3v3h-3zM861.17,375.44h3v3h-3zM861.6,371.14h3v3h-3zM861.94,366.81h3v3h-3zM862.19,362.43h3v3h-3zM862.34,358.02h3v3h-3zM862.4,353.57h3v3h-3zM862.37,349.09h3v3h-3zM862.24,344.58h3v3h-3zM862.01,340.05h3v3h-3zM861.68,335.48h3v3h-3zM861.26,330.9h3v3h-3zM860.73,326.29h3v3h-3zM860.1,321.66h3v3h-3zM859.38,317.02h3v3h-3zM858.54,312.36h3v3h-3zM857.61,307.68h3v3h-3zM856.58,303h3v3h-3zM855.43,298.3h3v3h-3zM854.19,293.6h3v3h-3zM852.84,288.9h3v3h-3zM851.38,284.19h3v3h-3zM849.82,279.48h3v3h-3zM848.15,274.78h3v3h-3zM846.38,270.08h3v3h-3zM844.5,265.39h3v3h-3zM842.51,260.7h3v3h-3zM840.42,256.03h3v3h-3zM838.21,251.37h3v3h-3zM835.9,246.73h3v3h-3zM833.49,242.1h3v3h-3zM830.96,237.5h3v3h-3zM828.33,232.92h3v3h-3zM825.59,228.36h3v3h-3zM822.75,223.84h3v3h-3zM819.8,219.34h3v3h-3zM816.74,214.87h3v3h-3zM813.58,210.44h3v3h-3zM810.31,206.04h3v3h-3zM806.93,201.69h3v3h-3zM803.45,197.37h3v3h-3zM799.87,193.1h3v3h-3zM796.18,188.87h3v3h-3zM792.39,184.7h3v3h-3zM788.49,180.57h3v3h-3zM784.5,176.49h3v3h-3zM780.4,172.47h3v3h-3zM776.2,168.51h3v3h-3zM771.91,164.61h3v3h-3zM767.51,160.77h3v3h-3zM763.01,156.99h3v3h-3zM758.42,153.27h3v3h-3zM753.74,149.63h3v3h-3zM748.95,146.05h3v3h-3z" fill="#ffe000" shape-rendering="crispEdges"/>
<path d="M610.92,551.26h3v3h-3zM611.11,554.17h3v3h-3zM611.39,557.11h3v3h-3zM611.76,560.06h3v3h-3zM612.21,563.02h3v3h-3zM612.75,565.99h3v3h-3zM613.37,568.98h3v3h-3zM614.08,571.97h3v3h-3zM614.88,574.97h3v3h-3zM615.76,577.97h3v3h-3zM616.74,580.97h3v3h-3zM617.8,583.97h3v3h-3zM618.95,586.97h3v3h-3zM620.18,589.96h3v3h-3zM621.51,592.94h3v3h-3zM622.92,595.92h3v3h-3zM624.43,598.88h3v3h-3zM626.02,601.83h3v3h-3zM627.7,604.76h3v3h-3zM629.47,607.67h3v3h-3zM631.32,610.56h3v3h-3zM633.26,613.43h3v3h-3zM635.29,616.28h3v3h-3zM637.41,619.09h3v3h-3zM639.62,621.88h3v3h-3zM641.91,624.63h3v3h-3zM644.28,627.35h3v3h-3zM646.74,630.04h3v3h-3zM649.29,632.69h3v3h-3zM651.91,635.29h3v3h-3zM654.63,637.86h3v3h-3zM657.42,640.38h3v3h-3zM660.29,642.85h3v3h-3zM663.25,645.28h3v3h-3zM666.28,647.65h3v3h-3zM669.4,649.97h3v3h-3zM672.59,652.24h3v3h-3zM675.85,654.45h3v3h-3zM679.2,656.61h3v3h-3zM682.61,658.7h3v3h-3zM686.11,660.73h3v3h-3zM689.67,662.7h3v3h-3zM693.3,664.6h3v3h-3zM697,666.43h3v3h-3zM700.78,668.19h3v3h-3zM704.61,669.89h3v3h-3zM708.52,671.51h3v3h-3zM712.48,673.05h3v3h-3zM716.51,674.52h3v3h-3zM720.6,675.91h3v3h-3zM724.75,677.22h3v3h-3zM728.96,678.45h3v3h-3zM733.22,679.6h3v3h-3zM737.54,680.66h3v3h-3zM741.91,681.64h3v3h-3zM746.34,682.53h3v3h-3zM750.81,683.33h3v3h-3zM755.32,684.04h3v3h-3zM759.89,684.66h3v3h-3zM764.5,685.19h3v3h-3zM769.15,685.62h3v3h-3zM773.84,685.96h3v3h-3zM778.56,686.21h3v3h-3zM783.33,686.35h3v3h-3zM788.13,686.4h3v3h-3zM792.96,686.35h3v3h-3zM797.82,686.2h3v3h-3zM802.7,685.95h3v3h-3zM807.62,685.59h3v3h-3zM812.56,685.13h3v3h-3zM817.52,684.57h3v3h-3zM822.49,683.9h3v3h-3zM827.49,683.13h3v3h-3zM832.5,682.25h3v3h-3zM837.53,681.26h3v3h-3zM842.56,680.17h3v3h-3zM847.61,678.97h3v3h-3zM852.66,677.66h3v3h-3zM857.71,676.24h3v3h-3zM862.77,674.71h3v3h-3zM867.83,673.07h3v3h-3zM872.88,671.32h3v3h-3zM877.93,669.47h3v3h-3zM882.97,667.49h3v3h-3zM888,665.41h3v3h-3zM893.02,663.22h3v3h-3zM898.03,660.92h3v3h-3zM903.02,658.5h3v3h-3zM907.99,655.97h3v3h-3zM912.94,653.33h3v3h-3zM917.86,650.58h3v3h-3zM922.76,647.72h3v3h-3zM927.64,644.75h3v3h-3zM932.48,641.67h3v3h-3zM937.29,638.47h3v3h-3zM942.06,635.17h3v3h-3zM946.79,631.75h3v3h-3zM951.49,628.23h3v3h-3zM956.14,624.59h3v3h-3zM960.75,620.85h3v3h-3zM965.32,617h3v3h-3z" fill="#fffae6" shape-rendering="crispEdges"/>
<path d="M770.16,489.28h3v3h-3zM772.77,487.96h3v3h-3zM775.36,486.56h3v3h-3zM777.93,485.07h3v3h-3zM780.49,483.5h3v3h-3zM783.02,481.85h3v3h-3zM785.52,480.11h3v3h-3zM788,478.29h3v3h-3zM790.45,476.39h3v3h-3zM792.87,474.4h3v3h-3zM795.26,472.34h3v3h-3zM797.61,470.19h3v3h-3zM799.92,467.97h3v3h-3zM802.19,465.66h3v3h-3zM804.42,463.28h3v3h-3zM806.61,460.82h3v3h-3zM808.75,458.28h3v3h-3zM810.85,455.66h3v3h-3zM812.89,452.97h3v3h-3zM814.89,450.21h3v3h-3zM816.83,447.38h3v3h-3zM818.71,444.47h3v3h-3zM820.54,441.49h3v3h-3zM822.31,438.44h3v3h-3zM824.02,435.33h3v3h-3zM825.66,432.15h3v3h-3zM827.24,428.9h3v3h-3zM828.76,425.59h3v3h-3zM830.2,422.21h3v3h-3zM831.58,418.77h3v3h-3zM832.88,415.28h3v3h-3zM834.12,411.72h3v3h-3zM835.27,408.11h3v3h-3zM836.36,404.45h3v3h-3zM837.36,400.73h3v3h-3zM838.29,396.95h3v3h-3zM839.13,393.13h3v3h-3zM839.9,389.26h3v3h-3zM840.58,385.34h3v3h-3zM841.17,381.38h3v3h-3zM841.68,377.37h3v3h-3zM842.1,373.33h3v3h-3zM842.44,369.24h3v3h-3zM842.68,365.11h3v3h-3zM842.84,360.95h3v3h-3zM842.9,356.76h3v3h-3zM842.87,352.53h3v3h-3zM842.75,348.28h3v3h-3zM842.53,344h3v3h-3zM842.22,339.69h3v3h-3zM841.81,335.35h3v3h-3zM841.3,331h3v3h-3zM840.7,326.63h3v3h-3zM839.99,322.24h3v3h-3zM839.19,317.83h3v3h-3zM838.29,313.41h3v3h-3zM837.28,308.98h3v3h-3zM836.18,304.54h3v3h-3zM834.97,300.1h3v3h-3zM833.66,295.65h3v3h-3zM832.25,291.2h3v3h-3zM830.74,286.74h3v3h-3zM829.12,282.3h3v3h-3zM827.4,277.85h3v3h-3zM825.57,273.41h3v3h-3zM823.64,268.99h3v3h-3zM821.61,264.57h3v3h-3zM819.47,260.17h3v3h-3zM817.23,255.78h3v3h-3zM814.88,251.41h3v3h-3zM812.43,247.06h3v3h-3zM809.88,242.74h3v3h-3zM807.22,238.43h3v3h-3zM804.46,234.16h3v3h-3zM801.59,229.92h3v3h-3zM798.62,225.71h3v3h-3zM795.55,221.53h3v3h-3zM792.37,217.39h3v3h-3zM789.1,213.29h3v3h-3zM785.72,209.22h3v3h-3zM782.24,205.21h3v3h-3zM778.66,201.23h3v3h-3zM774.98,197.31h3v3h-3zM771.2,193.43h3v3h-3zM767.32,189.61h3v3h-3zM763.35,185.84h3v3h-3zM759.27,182.13h3v3h-3zM755.11,178.47h3v3h-3zM750.84,174.88h3v3h-3zM746.48,171.35h3v3h-3zM742.03,167.89h3v3h-3zM737.49,164.49h3v3h-3zM732.85,161.16h3v3h-3zM728.12,157.9h3v3h-3zM723.31,154.72h3v3h-3zM718.4,151.61h3v3h-3zM713.41,148.58h3v3h-3zM708.34,145.63h3v3h-3zM703.18,142.76h3v3h-3zM697.93,139.97h3v3h-3zM692.61,137.27h3v3h-3z" fill="#000000" shape-rendering="crispEdges"/>
<path d="M754.39,525.68h3v3h-3zM757.3,525.45h3v3h-3zM760.23,525.14h3v3h-3zM763.18,524.74h3v3h-3zM766.14,524.26h3v3h-3zM769.1,523.69h3v3h-3zM772.08,523.03h3v3h-3zM775.07,522.29h3v3h-3zM778.06,521.46h3v3h-3zM781.05,520.54h3v3h-3zM784.04,519.54h3v3h-3zM787.03,518.45h3v3h-3zM790.01,517.26h3v3h-3zM792.99,516h3v3h-3zM795.96,514.64h3v3h-3zM798.92,513.19h3v3h-3zM801.86,511.66h3v3h-3zM804.79,510.03h3v3h-3zM807.71,508.32h3v3h-3zM810.6,506.52h3v3h-3zM813.47,504.64h3v3h-3zM816.32,502.66h3v3h-3zM819.14,500.6h3v3h-3zM821.93,498.45h3v3h-3zM824.7,496.22h3v3h-3zM827.43,493.9h3v3h-3zM830.12,491.5h3v3h-3zM832.78,489.01h3v3h-3zM835.4,486.44h3v3h-3zM837.98,483.78h3v3h-3zM840.51,481.04h3v3h-3zM843,478.22h3v3h-3zM845.45,475.32h3v3h-3zM847.84,472.34h3v3h-3zM850.18,469.28h3v3h-3zM852.47,466.14h3v3h-3zM854.7,462.93h3v3h-3zM856.88,459.63h3v3h-3zM859,456.27h3v3h-3zM861.05,452.83h3v3h-3zM863.05,449.32h3v3h-3zM864.97,445.73h3v3h-3zM866.84,442.08h3v3h-3zM868.63,438.36h3v3h-3zM870.35,434.57h3v3h-3zM872,430.71h3v3h-3zM873.58,426.79h3v3h-3zM875.08,422.81h3v3h-3zM876.51,418.76h3v3h-3zM877.85,414.66h3v3h-3zM879.12,410.49h3v3h-3zM880.3,406.27h3v3h-3zM881.4,402h3v3h-3zM882.42,397.67h3v3h-3zM883.35,393.29h3v3h-3zM884.19,388.86h3v3h-3zM884.95,384.38h3v3h-3zM885.61,379.85h3v3h-3zM886.18,375.28h3v3h-3zM886.66,370.67h3v3h-3zM887.04,366.01h3v3h-3zM887.33,361.32h3v3h-3zM887.53,356.59h3v3h-3zM887.62,351.82h3v3h-3zM887.62,347.03h3v3h-3zM887.51,342.2h3v3h-3zM887.31,337.34h3v3h-3zM887,332.45h3v3h-3zM886.6,327.54h3v3h-3zM886.08,322.61h3v3h-3zM885.47,317.66h3v3h-3zM884.75,312.68h3v3h-3zM883.92,307.7h3v3h-3zM882.99,302.69h3v3h-3zM881.95,297.68h3v3h-3zM880.8,292.66h3v3h-3zM879.55,287.63h3v3h-3zM878.18,282.59h3v3h-3zM876.71,277.55h3v3h-3zM875.13,272.51h3v3h-3zM873.43,267.47h3v3h-3zM871.63,262.44h3v3h-3zM869.72,257.41h3v3h-3zM867.69,252.39h3v3h-3zM865.56,247.38h3v3h-3zM863.31,242.38h3v3h-3zM860.95,237.4h3v3h-3zM858.48,232.44h3v3h-3zM855.9,227.5h3v3h-3zM853.21,222.58h3v3h-3zM850.41,217.68h3v3h-3zM847.49,212.81h3v3h-3zM844.47,207.97h3v3h-3zM841.33,203.16h3v3h-3zM838.09,198.39h3v3h-3zM834.73,193.65h3v3h-3zM831.26,188.95h3v3h-3zM827.69,184.3h3v3h-3zM824,179.68h3v3h-3zM820.21,175.11h3v3h-3zM816.31,170.59h3v3h-3z" fill="#000000" shape-rendering="crispEdges"/>
<path d="M710.43,373.31h3v3h-3zM709.64,370.5h3v3h-3zM708.75,367.69h3v3h-3zM707.78,364.88h3v3h-3zM706.73,362.07h3v3h-3zM705.59,359.28h3v3h-3zM704.36,356.48h3v3h-3zM703.04,353.71h3v3h-3zM701.64,350.94h3v3h-3zM700.15,348.19h3v3h-3zM698.58,345.45h3v3h-3zM696.92,342.74h3v3h-3zM695.17,340.04h3v3h-3zM693.34,337.37h3v3h-3zM691.43,334.73h3v3h-3zM689.43,332.11h3v3h-3zM687.34,329.53h3v3h-3zM685.17,326.97h3v3h-3zM682.92,324.45h3v3h-3zM680.59,321.97h3v3h-3zM678.17,319.53h3v3h-3zM675.68,317.12h3v3h-3zM673.1,314.76h3v3h-3zM670.45,312.45h3v3h-3zM667.71,310.18h3v3h-3zM664.9,307.96h3v3h-3zM662.02,305.79h3v3h-3zM659.05,303.67h3v3h-3zM656.01,301.61h3v3h-3zM652.9,299.6h3v3h-3zM649.72,297.66h3v3h-3zM646.46,295.77h3v3h-3zM643.14,293.95h3v3h-3zM639.74,292.19h3v3h-3zM636.28,290.49h3v3h-3zM632.76,288.87h3v3h-3zM629.16,287.31h3v3h-3zM625.51,285.82h3v3h-3zM621.79,284.41h3v3h-3zM618.02,283.07h3v3h-3zM614.18,281.81h3v3h-3zM610.29,280.62h3v3h-3zM606.34,279.52h3v3h-3zM602.34,278.49h3v3h-3zM598.28,277.55h3v3h-3zM594.18,276.69h3v3h-3zM590.02,275.91h3v3h-3zM585.82,275.23h3v3h-3zM581.57,274.62h3v3h-3zM577.28,274.11h3v3h-3zM572.95,273.69h3v3h-3zM568.58,273.36h3v3h-3zM564.17,273.12h3v3h-3zM559.73,272.98h3v3h-3zM555.25,272.93h3v3h-3zM550.74,272.97h3v3h-3zM546.2,273.12h3v3h-3zM541.63,273.36h3v3h-3zM537.04,273.7h3v3h-3zM532.42,274.13h3v3h-3zM527.78,274.67h3v3h-3zM523.12,275.31h3v3h-3zM518.45,276.06h3v3h-3zM513.76,276.9h3v3h-3zM509.05,277.85h3v3h-3zM504.34,278.9h3v3h-3zM499.62,280.06h3v3h-3zM494.89,281.32h3v3h-3zM490.15,282.68h3v3h-3zM485.42,284.16h3v3h-3zM480.68,285.73h3v3h-3zM475.95,287.42h3v3h-3zM471.22,289.21h3v3h-3zM466.5,291.11h3v3h-3zM461.79,293.12h3v3h-3zM457.09,295.23h3v3h-3zM452.4,297.45h3v3h-3zM447.74,299.78h3v3h-3zM443.08,302.22h3v3h-3zM438.45,304.76h3v3h-3zM433.85,307.41h3v3h-3zM429.27,310.17h3v3h-3zM424.71,313.04h3v3h-3zM420.19,316.01h3v3h-3zM415.7,319.09h3v3h-3zM411.24,322.28h3v3h-3zM406.82,325.57h3v3h-3zM402.44,328.97h3v3h-3zM398.1,332.47h3v3h-3zM393.81,336.08h3v3h-3zM389.56,339.79h3v3h-3zM385.36,343.6h3v3h-3zM381.21,347.52h3v3h-3zM377.11,351.54h3v3h-3zM373.07,355.66h3v3h-3zM369.09,359.89h3v3h-3zM365.16,364.21h3v3h-3zM361.3,368.63h3v3h-3zM357.5,373.15h3v3h-3zM353.77,377.77h3v3h-3zM350.1,382.48h3v3h-3z" fill="#000000" shape-rendering="crispEdges"/>
<path d="M761.7,513.29h3v3h-3zM764.56,512.65h3v3h-3zM767.41,511.93h3v3h-3zM770.27,511.13h3v3h-3zM773.14,510.24h3v3h-3zM776,509.26h3v3h-3zM778.85,508.19h3v3h-3zM781.7,507.04h3v3h-3zM784.55,505.8h3v3h-3zM787.38,504.47h3v3h-3zM790.2,503.06h3v3h-3zM793.01,501.56h3v3h-3zM795.8,499.97h3v3h-3zM798.57,498.29h3v3h-3zM801.32,496.53h3v3h-3zM804.05,494.69h3v3h-3zM806.75,492.76h3v3h-3zM809.42,490.74h3v3h-3zM812.07,488.64h3v3h-3zM814.68,486.45h3v3h-3zM817.26,484.18h3v3h-3zM819.8,481.83h3v3h-3zM822.31,479.39h3v3h-3zM824.77,476.87h3v3h-3zM827.19,474.27h3v3h-3zM829.57,471.6h3v3h-3zM831.9,468.84h3v3h-3zM834.19,466h3v3h-3zM836.42,463.09h3v3h-3zM838.6,460.1h3v3h-3zM840.73,457.03h3v3h-3zM842.8,453.89h3v3h-3zM844.81,450.67h3v3h-3zM846.76,447.39h3v3h-3zM848.65,444.03h3v3h-3zM850.48,440.6h3v3h-3zM852.24,437.1h3v3h-3zM853.94,433.54h3v3h-3zM855.56,429.91h3v3h-3zM857.12,426.22h3v3h-3zM858.6,422.46h3v3h-3zM860,418.64h3v3h-3zM861.34,414.76h3v3h-3zM862.59,410.83h3v3h-3zM863.77,406.83h3v3h-3zM864.86,402.79h3v3h-3zM865.87,398.68h3v3h-3zM866.8,394.53h3v3h-3zM867.65,390.32h3v3h-3zM868.4,386.07h3v3h-3zM869.08,381.77h3v3h-3zM869.66,377.43h3v3h-3zM870.15,373.04h3v3h-3zM870.55,368.61h3v3h-3zM870.86,364.14h3v3h-3zM871.07,359.63h3v3h-3zM871.19,355.09h3v3h-3zM871.21,350.52h3v3h-3zM871.14,345.91h3v3h-3zM870.96,341.28h3v3h-3zM870.69,336.62h3v3h-3zM870.32,331.93h3v3h-3zM869.85,327.22h3v3h-3zM869.28,322.49h3v3h-3zM868.6,317.74h3v3h-3zM867.82,312.97h3v3h-3zM866.94,308.19h3v3h-3zM865.95,303.39h3v3h-3zM864.86,298.59h3v3h-3zM863.67,293.78h3v3h-3zM862.36,288.96h3v3h-3zM860.95,284.14h3v3h-3zM859.44,279.31h3v3h-3zM857.81,274.49h3v3h-3zM856.08,269.67h3v3h-3zM854.24,264.86h3v3h-3zM852.29,260.05h3v3h-3zM850.24,255.26h3v3h-3zM848.07,250.48h3v3h-3zM845.8,245.71h3v3h-3zM843.42,240.95h3v3h-3zM840.93,236.22h3v3h-3zM838.33,231.51h3v3h-3zM835.62,226.82h3v3h-3zM832.8,222.16h3v3h-3zM829.88,217.53h3v3h-3zM826.85,212.93h3v3h-3zM823.71,208.36h3v3h-3zM820.46,203.83h3v3h-3zM817.11,199.33h3v3h-3zM813.64,194.88h3v3h-3zM810.08,190.47h3v3h-3zM806.4,186.1h3v3h-3zM802.63,181.78h3v3h-3zM798.74,177.5h3v3h-3zM794.76,173.28h3v3h-3zM790.67,169.12h3v3h-3zM786.47,165h3v3h-3zM782.18,160.95h3v3h-3zM777.79,156.96h3v3h-3zM773.29,153.03h3v3h-3z" fill="#000000" shape-rendering="crispEdges"/>
<path d="M757.27,521.26h3v3h-3zM760.17,520.88h3v3h-3zM763.08,520.42h3v3h-3zM766,519.87h3v3h-3zM768.93,519.24h3v3h-3zM771.86,518.51h3v3h-3zM774.81,517.71h3v3h-3zM777.75,516.81h3v3h-3zM780.69,515.83h3v3h-3zM783.63,514.76h3v3h-3zM786.56,513.6h3v3h-3zM789.49,512.36h3v3h-3zM792.41,511.02h3v3h-3zM795.32,509.6h3v3h-3zM798.22,508.09h3v3h-3zM801.1,506.5h3v3h-3zM803.96,504.81h3v3h-3zM806.8,503.04h3v3h-3zM809.63,501.18h3v3h-3zM812.42,499.24h3v3h-3zM815.19,497.2h3v3h-3zM817.93,495.09h3v3h-3zM820.65,492.88h3v3h-3zM823.33,490.59h3v3h-3zM825.97,488.22h3v3h-3zM828.58,485.76h3v3h-3zM831.14,483.22h3v3h-3zM833.67,480.6h3v3h-3zM836.15,477.9h3v3h-3zM838.59,475.11h3v3h-3zM840.98,472.25h3v3h-3zM843.33,469.3h3v3h-3zM845.62,466.28h3v3h-3zM847.85,463.18h3v3h-3zM850.03,460h3v3h-3zM852.16,456.75h3v3h-3zM854.22,453.43h3v3h-3zM856.23,450.03h3v3h-3zM858.17,446.56h3v3h-3zM860.04,443.02h3v3h-3zM861.85,439.4h3v3h-3zM863.59,435.73h3v3h-3zM865.27,431.98h3v3h-3zM866.87,428.17h3v3h-3zM868.39,424.3h3v3h-3zM869.84,420.36h3v3h-3zM871.21,416.37h3v3h-3zM872.51,412.31h3v3h-3zM873.72,408.2h3v3h-3zM874.86,404.03h3v3h-3zM875.91,399.81h3v3h-3zM876.87,395.53h3v3h-3zM877.75,391.2h3v3h-3zM878.55,386.83h3v3h-3zM879.25,382.4h3v3h-3zM879.86,377.94h3v3h-3zM880.38,373.42h3v3h-3zM880.81,368.87h3v3h-3zM881.15,364.28h3v3h-3zM881.39,359.64h3v3h-3zM881.53,354.98h3v3h-3zM881.58,350.27h3v3h-3zM881.53,345.54h3v3h-3zM881.38,340.78h3v3h-3zM881.13,335.99h3v3h-3zM880.78,331.17h3v3h-3zM880.32,326.33h3v3h-3zM879.77,321.46h3v3h-3zM879.11,316.58h3v3h-3zM878.34,311.68h3v3h-3zM877.47,306.77h3v3h-3zM876.5,301.84h3v3h-3zM875.41,296.9h3v3h-3zM874.23,291.95h3v3h-3zM872.93,287h3v3h-3zM871.52,282.04h3v3h-3zM870.01,277.08h3v3h-3zM868.39,272.12h3v3h-3zM866.66,267.16h3v3h-3zM864.82,262.21h3v3h-3zM862.87,257.27h3v3h-3zM860.81,252.33h3v3h-3zM858.64,247.41h3v3h-3zM856.36,242.5h3v3h-3zM853.97,237.61h3v3h-3zM851.47,232.73h3v3h-3zM848.86,227.88h3v3h-3zM846.13,223.05h3v3h-3zM843.3,218.25h3v3h-3zM840.36,213.47h3v3h-3zM837.31,208.73h3v3h-3zM834.15,204.01h3v3h-3zM830.88,199.34h3v3h-3zM827.5,194.7h3v3h-3zM824.01,190.1h3v3h-3zM820.42,185.54h3v3h-3zM816.71,181.02h3v3h-3zM812.9,176.56h3v3h-3zM808.99,172.14h3v3h-3zM804.96,167.77h3v3h-3zM800.84,163.46h3v3h-3z" fill="#000000" shape-rendering="crispEdges"/>
<path d="M721.77,379.03h3v3h-3zM721.32,376.14h3v3h-3zM720.79,373.24h3v3h-3zM720.18,370.34h3v3h-3zM719.48,367.42h3v3h-3zM718.69,364.5h3v3h-3zM717.82,361.58h3v3h-3zM716.85,358.66h3v3h-3zM715.81,355.74h3v3h-3zM714.67,352.83h3v3h-3zM713.44,349.92h3v3h-3zM712.13,347.02h3v3h-3zM710.73,344.13h3v3h-3zM709.25,341.25h3v3h-3zM707.67,338.39h3v3h-3zM706.01,335.55h3v3h-3zM704.26,332.73h3v3h-3zM702.43,329.92h3v3h-3zM700.5,327.15h3v3h-3zM698.5,324.39h3v3h-3zM696.4,321.67h3v3h-3zM694.22,318.98h3v3h-3zM691.96,316.32h3v3h-3zM689.61,313.69h3v3h-3zM687.18,311.1h3v3h-3zM684.66,308.55h3v3h-3zM682.06,306.04h3v3h-3zM679.39,303.57h3v3h-3zM676.63,301.15h3v3h-3zM673.79,298.78h3v3h-3zM670.87,296.45h3v3h-3zM667.87,294.18h3v3h-3zM664.8,291.96h3v3h-3zM661.65,289.79h3v3h-3zM658.42,287.68h3v3h-3zM655.12,285.63h3v3h-3zM651.75,283.64h3v3h-3zM648.31,281.72h3v3h-3zM644.79,279.86h3v3h-3zM641.21,278.06h3v3h-3zM637.56,276.33h3v3h-3zM633.84,274.68h3v3h-3zM630.06,273.09h3v3h-3zM626.22,271.58h3v3h-3zM622.31,270.14h3v3h-3zM618.34,268.78h3v3h-3zM614.31,267.5h3v3h-3zM610.23,266.29h3v3h-3zM606.09,265.17h3v3h-3zM601.9,264.13h3v3h-3zM597.65,263.18h3v3h-3zM593.36,262.31h3v3h-3zM589.01,261.53h3v3h-3zM584.62,260.84h3v3h-3zM580.18,260.24h3v3h-3zM575.7,259.72h3v3h-3zM571.17,259.3h3v3h-3zM566.61,258.98h3v3h-3zM562.01,258.75h3v3h-3zM557.38,258.61h3v3h-3zM552.71,258.57h3v3h-3zM548,258.63h3v3h-3zM543.27,258.79h3v3h-3zM538.51,259.05h3v3h-3zM533.73,259.41h3v3h-3zM528.92,259.87h3v3h-3zM524.09,260.43h3v3h-3zM519.24,261.1h3v3h-3zM514.38,261.87h3v3h-3zM509.49,262.75h3v3h-3zM504.6,263.73h3v3h-3zM499.7,264.82h3v3h-3zM494.78,266.01h3v3h-3zM489.86,267.31h3v3h-3zM484.94,268.72h3v3h-3zM480.02,270.23h3v3h-3zM475.09,271.86h3v3h-3zM470.17,273.59h3v3h-3zM465.25,275.44h3v3h-3zM460.35,277.39h3v3h-3zM455.45,279.45h3v3h-3zM450.56,281.62h3v3h-3zM445.69,283.9h3v3h-3zM440.83,286.29h3v3h-3zM435.99,288.8h3v3h-3zM431.18,291.41h3v3h-3zM426.38,294.13h3v3h-3zM421.62,296.96h3v3h-3zM416.88,299.9h3v3h-3zM412.17,302.95h3v3h-3zM407.5,306.1h3v3h-3zM402.86,309.37h3v3h-3zM398.26,312.75h3v3h-3zM393.69,316.23h3v3h-3zM389.17,319.82h3v3h-3zM384.7,323.52h3v3h-3zM380.27,327.32h3v3h-3zM375.89,331.23h3v3h-3zM371.56,335.25h3v3h-3zM367.29,339.37h3v3h-3zM363.07,343.59h3v3h-3z" fill="#8400c8" shape-rendering="crispEdges"/>
<path d="M770.22,445.98h3v3h-3zM772.05,443.71h3v3h-3zM773.83,441.36h3v3h-3zM775.56,438.95h3v3h-3zM777.24,436.46h3v3h-3zM778.86,433.91h3v3h-3zM780.43,431.29h3v3h-3zM781.93,428.61h3v3h-3zM783.38,425.87h3v3h-3zM784.76,423.06h3v3h-3zM786.08,420.2h3v3h-3zM787.34,417.27h3v3h-3zM788.52,414.29h3v3h-3zM789.64,411.25h3v3h-3zM790.69,408.16h3v3h-3zM791.67,405.01h3v3h-3zM792.57,401.82h3v3h-3zM793.4,398.57h3v3h-3zM794.15,395.28h3v3h-3zM794.83,391.94h3v3h-3zM795.42,388.55h3v3h-3zM795.94,385.13h3v3h-3zM796.37,381.66h3v3h-3zM796.73,378.16h3v3h-3zM797,374.61h3v3h-3zM797.18,371.04h3v3h-3zM797.28,367.43h3v3h-3zM797.29,363.78h3v3h-3zM797.21,360.11h3v3h-3zM797.05,356.41h3v3h-3zM796.8,352.69h3v3h-3zM796.45,348.95h3v3h-3zM796.01,345.18h3v3h-3zM795.49,341.39h3v3h-3zM794.87,337.59h3v3h-3zM794.15,333.77h3v3h-3zM793.34,329.94h3v3h-3zM792.44,326.1h3v3h-3zM791.44,322.25h3v3h-3zM790.35,318.4h3v3h-3zM789.16,314.54h3v3h-3zM787.87,310.67h3v3h-3zM786.49,306.81h3v3h-3zM785.01,302.96h3v3h-3zM783.44,299.1h3v3h-3zM781.76,295.26h3v3h-3zM779.99,291.42h3v3h-3zM778.12,287.6h3v3h-3zM776.16,283.78h3v3h-3zM774.09,279.99h3v3h-3zM771.93,276.21h3v3h-3zM769.67,272.46h3v3h-3zM767.31,268.72h3v3h-3zM764.86,265.01h3v3h-3zM762.31,261.33h3v3h-3zM759.66,257.68h3v3h-3zM756.92,254.06h3v3h-3zM754.08,250.47h3v3h-3zM751.15,246.92h3v3h-3zM748.12,243.41h3v3h-3zM744.99,239.94h3v3h-3zM741.78,236.51h3v3h-3zM738.47,233.13h3v3h-3zM735.06,229.79h3v3h-3zM731.57,226.5h3v3h-3zM727.98,223.26h3v3h-3zM724.31,220.08h3v3h-3zM720.54,216.95h3v3h-3zM716.69,213.88h3v3h-3zM712.75,210.87h3v3h-3zM708.72,207.92h3v3h-3zM704.61,205.04h3v3h-3zM700.41,202.22h3v3h-3zM696.13,199.47h3v3h-3zM691.77,196.78h3v3h-3zM687.33,194.17h3v3h-3zM682.8,191.64h3v3h-3zM678.2,189.18h3v3h-3zM673.52,186.79h3v3h-3zM668.77,184.49h3v3h-3zM663.94,182.26h3v3h-3zM659.04,180.12h3v3h-3zM654.07,178.07h3v3h-3zM649.03,176.1h3v3h-3zM643.92,174.22h3v3h-3zM638.74,172.43h3v3h-3zM633.5,170.73h3v3h-3zM628.19,169.12h3v3h-3zM622.83,167.61h3v3h-3zM617.4,166.19h3v3h-3zM611.91,164.87h3v3h-3zM606.37,163.66h3v3h-3zM600.77,162.54h3v3h-3zM595.13,161.52h3v3h-3zM589.42,160.61h3v3h-3zM583.68,159.8h3v3h-3zM577.88,159.1h3v3h-3zM572.04,158.51h3v3h-3zM566.15,158.03h3v3h-3zM560.23,157.66h3v3h-3zM554.26,157.39h3v3h-3z" fill="#8400c8" shape-rendering="crispEdges"/>
<path d="M746.25,536h3v3h-3zM749.17,536.14h3v3h-3zM752.12,536.21h3v3h-3zM755.09,536.19h3v3h-3zM758.08,536.09h3v3h-3zM761.1,535.91h3v3h-3zM764.14,535.64h3v3h-3zM767.19,535.28h3v3h-3zM770.26,534.84h3v3h-3zM773.35,534.31h3v3h-3zM776.44,533.7h3v3h-3zM779.55,533h3v3h-3zM782.66,532.21h3v3h-3zM785.77,531.33h3v3h-3zM788.89,530.36h3v3h-3zM792.01,529.31h3v3h-3zM795.13,528.16h3v3h-3zM798.24,526.93h3v3h-3zM801.35,525.6h3v3h-3zM804.45,524.19h3v3h-3zM807.54,522.69h3v3h-3zM810.62,521.09h3v3h-3zM813.68,519.41h3v3h-3zM816.73,517.64h3v3h-3zM819.75,515.78h3v3h-3zM822.76,513.82h3v3h-3zM825.74,511.78h3v3h-3zM828.69,509.66h3v3h-3zM831.62,507.44h3v3h-3zM834.52,505.13h3v3h-3zM837.38,502.74h3v3h-3zM840.21,500.26h3v3h-3zM843,497.7h3v3h-3zM845.76,495.05h3v3h-3zM848.47,492.31h3v3h-3zM851.14,489.49h3v3h-3zM853.77,486.59h3v3h-3zM856.35,483.61h3v3h-3zM858.88,480.54h3v3h-3zM861.36,477.39h3v3h-3zM863.79,474.16h3v3h-3zM866.16,470.85h3v3h-3zM868.47,467.47h3v3h-3zM870.72,464.01h3v3h-3zM872.92,460.47h3v3h-3zM875.05,456.85h3v3h-3zM877.11,453.17h3v3h-3zM879.11,449.41h3v3h-3zM881.04,445.58h3v3h-3zM882.91,441.68h3v3h-3zM884.69,437.71h3v3h-3zM886.41,433.68h3v3h-3zM888.05,429.58h3v3h-3zM889.61,425.42h3v3h-3zM891.09,421.19h3v3h-3zM892.49,416.9h3v3h-3zM893.81,412.56h3v3h-3zM895.05,408.15h3v3h-3zM896.2,403.69h3v3h-3zM897.27,399.18h3v3h-3zM898.24,394.61h3v3h-3zM899.13,389.99h3v3h-3zM899.93,385.33h3v3h-3zM900.63,380.61h3v3h-3zM901.24,375.85h3v3h-3zM901.76,371.05h3v3h-3zM902.18,366.21h3v3h-3zM902.5,361.32h3v3h-3zM902.72,356.4h3v3h-3zM902.85,351.44h3v3h-3zM902.87,346.45h3v3h-3zM902.79,341.43h3v3h-3zM902.61,336.38h3v3h-3zM902.32,331.3h3v3h-3zM901.93,326.19h3v3h-3zM901.44,321.06h3v3h-3zM900.84,315.91h3v3h-3zM900.13,310.74h3v3h-3zM899.31,305.56h3v3h-3zM898.39,300.35h3v3h-3zM897.35,295.14h3v3h-3zM896.21,289.92h3v3h-3zM894.95,284.68h3v3h-3zM893.59,279.45h3v3h-3zM892.11,274.21h3v3h-3zM890.52,268.96h3v3h-3zM888.82,263.72h3v3h-3zM887,258.48h3v3h-3zM885.08,253.25h3v3h-3zM883.04,248.03h3v3h-3zM880.88,242.81h3v3h-3zM878.62,237.61h3v3h-3zM876.23,232.42h3v3h-3zM873.74,227.25h3v3h-3zM871.13,222.1h3v3h-3zM868.41,216.98h3v3h-3zM865.57,211.87h3v3h-3zM862.62,206.8h3v3h-3zM859.56,201.75h3v3h-3zM856.38,196.73h3v3h-3zM853.09,191.75h3v3h-3z" fill="#8400c8" shape-rendering="crispEdges"/>
<path d="M567.5,467.5h3v3h-3zM565.23,469.34h3v3h-3zM563,471.26h3v3h-3zM560.8,473.26h3v3h-3zM558.64,475.34h3v3h-3zM556.51,477.49h3v3h-3zM554.43,479.72h3v3h-3zM552.4,482.03h3v3h-3zM550.41,484.41h3v3h-3zM548.47,486.86h3v3h-3zM546.58,489.38h3v3h-3zM544.73,491.98h3v3h-3zM542.95,494.65h3v3h-3zM541.22,497.38h3v3h-3zM539.54,500.19h3v3h-3zM537.93,503.06h3v3h-3zM536.37,505.99h3v3h-3zM534.88,508.99h3v3h-3zM533.46,512.05h3v3h-3zM532.09,515.18h3v3h-3zM530.8,518.36h3v3h-3zM529.58,521.6h3v3h-3zM528.42,524.9h3v3h-3zM527.34,528.25h3v3h-3zM526.34,531.66h3v3h-3zM525.4,535.12h3v3h-3zM524.55,538.63h3v3h-3zM523.77,542.19h3v3h-3zM523.08,545.79h3v3h-3zM522.46,549.44h3v3h-3zM521.93,553.14h3v3h-3zM521.48,556.87h3v3h-3zM521.12,560.65h3v3h-3zM520.84,564.46h3v3h-3zM520.65,568.31h3v3h-3zM520.54,572.19h3v3h-3zM520.53,576.1h3v3h-3zM520.61,580.05h3v3h-3zM520.77,584.02h3v3h-3zM521.03,588.02h3v3h-3zM521.39,592.04h3v3h-3zM521.83,596.09h3v3h-3zM522.37,600.15h3v3h-3zM523.01,604.24h3v3h-3zM523.74,608.33h3v3h-3zM524.57,612.45h3v3h-3zM525.5,616.57h3v3h-3zM526.52,620.7h3v3h-3zM527.65,624.84h3v3h-3zM528.87,628.98h3v3h-3zM530.19,633.13h3v3h-3zM531.61,637.28h3v3h-3zM533.13,641.42h3v3h-3zM534.75,645.56h3v3h-3zM536.47,649.7h3v3h-3zM538.29,653.83h3v3h-3zM540.22,657.94h3v3h-3zM542.24,662.04h3v3h-3zM544.36,666.13h3v3h-3zM546.59,670.2h3v3h-3zM548.91,674.25h3v3h-3zM551.34,678.28h3v3h-3zM553.86,682.28h3v3h-3zM556.49,686.26h3v3h-3zM559.22,690.21h3v3h-3zM562.04,694.13h3v3h-3zM564.97,698.01h3v3h-3zM567.99,701.86h3v3h-3zM571.12,705.67h3v3h-3zM574.34,709.44h3v3h-3zM577.66,713.17h3v3h-3zM581.07,716.85h3v3h-3zM584.58,720.49h3v3h-3zM588.19,724.08h3v3h-3zM591.89,727.62h3v3h-3zM595.69,731.1h3v3h-3zM599.58,734.53h3v3h-3zM603.56,737.9h3v3h-3zM607.63,741.21h3v3h-3zM611.8,744.47h3v3h-3zM616.05,747.65h3v3h-3zM620.39,750.77h3v3h-3zM624.82,753.83h3v3h-3zM629.34,756.81h3v3h-3zM633.94,759.72h3v3h-3zM638.63,762.56h3v3h-3zM643.39,765.32h3v3h-3zM648.24,768.01h3v3h-3zM653.17,770.61h3v3h-3zM658.18,773.14h3v3h-3zM663.27,775.58h3v3h-3zM668.43,777.93h3v3h-3zM673.67,780.2h3v3h-3zM678.98,782.38h3v3h-3zM684.36,784.46h3v3h-3zM689.82,786.46h3v3h-3zM695.34,788.36h3v3h-3zM700.92,790.17h3v3h-3zM706.58,791.87h3v3h-3zM712.29,793.48h3v3h-3zM718.07,794.99h3v3h-3z" fill="#000000" shape-rendering="crispEdges"/>
<path d="M690.81,367.14h3v3h-3zM689.47,364.54h3v3h-3zM688.05,361.96h3v3h-3zM686.53,359.4h3v3h-3zM684.94,356.86h3v3h-3zM683.26,354.35h3v3h-3zM681.5,351.86h3v3h-3zM679.66,349.4h3v3h-3zM677.73,346.97h3v3h-3zM675.72,344.57h3v3h-3zM673.64,342.2h3v3h-3zM671.47,339.87h3v3h-3zM669.22,337.58h3v3h-3zM666.89,335.33h3v3h-3zM664.49,333.12h3v3h-3zM662,330.96h3v3h-3zM659.45,328.84h3v3h-3zM656.81,326.77h3v3h-3zM654.1,324.75h3v3h-3zM651.32,322.79h3v3h-3zM648.47,320.87h3v3h-3zM645.54,319.02h3v3h-3zM642.55,317.22h3v3h-3zM639.48,315.48h3v3h-3zM636.35,313.8h3v3h-3zM633.15,312.19h3v3h-3zM629.89,310.64h3v3h-3zM626.56,309.15h3v3h-3zM623.17,307.74h3v3h-3zM619.73,306.4h3v3h-3zM616.22,305.13h3v3h-3zM612.65,303.93h3v3h-3zM609.03,302.8h3v3h-3zM605.35,301.76h3v3h-3zM601.62,300.79h3v3h-3zM597.84,299.9h3v3h-3zM594.01,299.09h3v3h-3zM590.13,298.36h3v3h-3zM586.21,297.72h3v3h-3zM582.24,297.16h3v3h-3zM578.23,296.69h3v3h-3zM574.18,296.31h3v3h-3zM570.09,296.01h3v3h-3zM565.96,295.81h3v3h-3zM561.8,295.69h3v3h-3zM557.61,295.67h3v3h-3zM553.38,295.74h3v3h-3zM549.13,295.9h3v3h-3zM544.85,296.16h3v3h-3zM540.54,296.52h3v3h-3zM536.21,296.97h3v3h-3zM531.86,297.52h3v3h-3zM527.49,298.16h3v3h-3zM523.11,298.91h3v3h-3zM518.71,299.75h3v3h-3zM514.3,300.7h3v3h-3zM509.88,301.75h3v3h-3zM505.45,302.89h3v3h-3zM501.02,304.14h3v3h-3zM496.58,305.5h3v3h-3zM492.15,306.95h3v3h-3zM487.71,308.51h3v3h-3zM483.28,310.17h3v3h-3zM478.85,311.93h3v3h-3zM474.43,313.8h3v3h-3zM470.02,315.77h3v3h-3zM465.62,317.85h3v3h-3zM461.24,320.03h3v3h-3zM456.87,322.31h3v3h-3zM452.53,324.7h3v3h-3zM448.2,327.19h3v3h-3zM443.9,329.79h3v3h-3zM439.63,332.49h3v3h-3zM435.38,335.29h3v3h-3zM431.17,338.2h3v3h-3zM426.98,341.21h3v3h-3zM422.83,344.32h3v3h-3zM418.72,347.53h3v3h-3zM414.65,350.85h3v3h-3zM410.62,354.27h3v3h-3zM406.64,357.78h3v3h-3zM402.7,361.4h3v3h-3zM398.81,365.12h3v3h-3zM394.97,368.93h3v3h-3zM391.19,372.85h3v3h-3zM387.46,376.86h3v3h-3zM383.78,380.97h3v3h-3zM380.17,385.17h3v3h-3zM376.62,389.47h3v3h-3zM373.13,393.86h3v3h-3zM369.71,398.35h3v3h-3zM366.36,402.93h3v3h-3zM363.07,407.59h3v3h-3zM359.86,412.35h3v3h-3zM356.72,417.2h3v3h-3zM353.66,422.13h3v3h-3zM350.68,427.15h3v3h-3zM347.78,432.25h3v3h-3zM344.96,437.44h3v3h-3zM342.22,442.71h3v3h-3zM339.57,448.06h3v3h-3z" fill="#000000" shape-rendering="crispEdges"/>
<g transform="translate(65,102.8)" color="#ffe000"><circle r="5" fill="none" stroke="currentColor" stroke-width="2.01"/><circle r="1.2" fill="currentColor"/></g>
<g transform="translate(94,102.8) scale(1.08)" color="#008b9b"><path d="M-6.5,-0.6 l2.2,-2.6 l2.2,2.6 l2.2,-2.6 l2.2,2.6 l2.2,-2.6 l1.7,2 M-6.5,4 l2.2,-2.6 l2.2,2.6 l2.2,-2.6 l2.2,2.6 l2.2,-2.6 l1.7,2" fill="none" stroke="currentColor" stroke-width="1.89"/></g>
<g transform="translate(65,119.47)" color="#fffae6"><path d="M-3.5,-5.2 A6,6 0 1 1 -3.5,5.2 A4.6,4.6 0 0 0 -3.5,-5.2 Z" fill="none" stroke="currentColor" stroke-width="1.77"/></g>
<g transform="translate(94,119.47) scale(1.08)" color="#0000ff"><path d="M-6,-4.5 V4.5 M-6,-2.6 Q-4.5,-5.6 -3,-3.4 V4.5 M-3,-2.6 Q-1.5,-5.6 0,-3.4 V3.5 Q0.4,6 3.6,5.6 M2.2,3.6 L4.4,5.6 L2.6,7.4" fill="none" stroke="currentColor" stroke-width="1.77"/></g>
<g transform="translate(65,136.14)" color="#000000"><path d="M-3,-7.4 A3,2.6 0 0 0 3,-7.4 M0,1.3 V6.8 M-2.6,4.3 H2.6" fill="none" stroke="currentColor" stroke-width="1.89"/><circle cy="-1.6" r="2.9" fill="none" stroke="currentColor" stroke-width="1.89"/></g>
<g transform="translate(94,136.14) scale(1.08)" color="#008b9b"><path d="M-6.5,-0.6 l2.2,-2.6 l2.2,2.6 l2.2,-2.6 l2.2,2.6 l2.2,-2.6 l1.7,2 M-6.5,4 l2.2,-2.6 l2.2,2.6 l2.2,-2.6 l2.2,2.6 l2.2,-2.6 l1.7,2" fill="none" stroke="currentColor" stroke-width="1.89"/></g>
<g transform="translate(65,152.81)" color="#000000"><circle cy="-2.4" r="3.2" fill="none" stroke="currentColor" stroke-width="1.89"/><path d="M0,0.8 V6.8 M-2.8,4.2 H2.8" fill="none" stroke="currentColor" stroke-width="1.89"/></g>
<g transform="translate(94,152.81) scale(1.08)" color="#008b9b"><path d="M-6.5,-0.6 l2.2,-2.6 l2.2,2.6 l2.2,-2.6 l2.2,2.6 l2.2,-2.6 l1.7,2 M-6.5,4 l2.2,-2.6 l2.2,2.6 l2.2,-2.6 l2.2,2.6 l2.2,-2.6 l1.7,2" fill="none" stroke="currentColor" stroke-width="1.89"/></g>
<g transform="translate(65,169.48)" color="#000000"><circle cx="-1.6" cy="1.8" r="3.6" fill="none" stroke="currentColor" stroke-width="1.89"/><path d="M1,-0.8 L5.2,-5 M1.6,-5.4 H5.4 V-1.6" fill="none" stroke="currentColor" stroke-width="1.89"/></g>
<g transform="translate(94,169.48) scale(1.08)" color="#804040"><circle cy="2.8" r="3.6" fill="none" stroke="currentColor" stroke-width="1.9"/><path d="M-5,-6.4 C-5,-2.4 -3.2,-1 0,-1 C3.2,-1 5,-2.4 5,-6.4" fill="none" stroke="currentColor" stroke-width="1.9"/></g>
<g transform="translate(65,186.15)" color="#000000"><path d="M-3.8,-4.2 Q-2.5,-6.8 -0.2,-5.6 Q1.4,-4.4 -0.6,-1.6 L-3.8,2.6 H4.6 M2.2,-1.2 V6.8" fill="none" stroke="currentColor" stroke-width="1.89"/></g>
<g transform="translate(94,186.15) scale(1.08)" color="#008b9b"><path d="M-6.5,-0.6 l2.2,-2.6 l2.2,2.6 l2.2,-2.6 l2.2,2.6 l2.2,-2.6 l1.7,2 M-6.5,4 l2.2,-2.6 l2.2,2.6 l2.2,-2.6 l2.2,2.6 l2.2,-2.6 l1.7,2" fill="none" stroke="currentColor" stroke-width="1.89"/></g>
<g transform="translate(65,202.82)" color="#000000"><path d="M-2.2,-6.5 V4 M-4.2,-4.2 H0.4 M-2.2,0 Q0.5,-3 2.8,-1.2 Q4.2,0.5 2.4,3 Q1,4.8 2.8,6.6" fill="none" stroke="currentColor" stroke-width="1.89"/></g>
<g transform="translate(94,202.82) scale(1.08)" color="#008b9b"><path d="M-6.5,-0.6 l2.2,-2.6 l2.2,2.6 l2.2,-2.6 l2.2,2.6 l2.2,-2.6 l1.7,2 M-6.5,4 l2.2,-2.6 l2.2,2.6 l2.2,-2.6 l2.2,2.6 l2.2,-2.6 l1.7,2" fill="none" stroke="currentColor" stroke-width="1.89"/></g>
<g transform="translate(65,219.49)" color="#8400c8"><path d="M-5,-6.5 Q-1.6,-2 -5,2.6 M5,-6.5 Q1.6,-2 5,2.6 M-3.2,-2 H3.2 M0,-6.5 V2.8" fill="none" stroke="currentColor" stroke-width="1.89"/><circle cy="4.8" r="2" fill="none" stroke="currentColor" stroke-width="1.77"/></g>
<g transform="translate(94,219.49) scale(1.08)" color="#804040"><circle cy="2.8" r="3.6" fill="none" stroke="currentColor" stroke-width="1.9"/><path d="M-5,-6.4 C-5,-2.4 -3.2,-1 0,-1 C3.2,-1 5,-2.4 5,-6.4" fill="none" stroke="currentColor" stroke-width="1.9"/></g>
<g transform="translate(65,236.16)" color="#8400c8"><path d="M-4.6,-5.5 Q-4.6,1.2 0,1.2 Q4.6,1.2 4.6,-5.5 M0,-6.5 V6.8 M-2.6,4.2 H2.6" fill="none" stroke="currentColor" stroke-width="1.89"/></g>
<g transform="translate(94,236.16) scale(1.08)" color="#0000ff"><path d="M-5,-6 Q2.6,0 -5,6 M5,-6 Q-2.6,0 5,6 M-3.5,0 H3.5" fill="none" stroke="currentColor" stroke-width="1.89"/></g>
<g transform="translate(65,252.83)" color="#8400c8"><circle cy="-4" r="2" fill="none" stroke="currentColor" stroke-width="1.77"/><path d="M-4.6,-5.2 Q-4.6,1.4 0,1.4 Q4.6,1.4 4.6,-5.2 M0,1.4 V6.8 M-2.6,4.4 H2.6" fill="none" stroke="currentColor" stroke-width="1.89"/></g>
<g transform="translate(94,252.83) scale(1.08)" color="#804040"><path d="M-5.6,-4.2 Q-4.4,-6 -3.2,-4.2 V2.8 M-3.2,-3 Q-1,-6.4 1.6,-5.6 Q3.6,-4.8 2.6,-0.8 L0.8,4.2 Q0,6.4 -2,6.9" fill="none" stroke="currentColor" stroke-width="1.7"/><circle cx="3.2" cy="3.6" r="2.4" fill="none" stroke="currentColor" stroke-width="1.7"/></g>
<g transform="translate(65,269.5)" color="#000000"><path d="M-2.2,3.6 C-6,1 -5.5,-5.6 0,-5.6 C5.5,-5.6 6,1 2.2,3.6" fill="none" stroke="currentColor" stroke-width="2.12"/><circle cx="-3.3" cy="4.6" r="1.6" fill="none" stroke="currentColor" stroke-width="1.77"/><circle cx="3.3" cy="4.6" r="1.6" fill="none" stroke="currentColor" stroke-width="1.77"/></g>
<g transform="translate(94,269.5) scale(1.08)" color="#008b9b"><path d="M-5,-6.2 H5 M-5,6.2 H5 M-2,-6 V6 M2,-6 V6" fill="none" stroke="currentColor" stroke-width="1.89"/></g>
<g transform="translate(65,286.17)" color="#808080"><path d="M-1,-6.5 V2.2 M-1,-1.8 L3,-6 M-0.6,-2 L3,1.2" fill="none" stroke="currentColor" stroke-width="1.65"/><circle cx="-1" cy="4.4" r="2.1" fill="none" stroke="currentColor" stroke-width="1.65"/></g>
<g transform="translate(94,286.17) scale(1.08)" color="#ff0000"><path d="M0,-1.5 C-0.4,-6.2 -6,-6.8 -6,-3.2 C-6,-1.6 -4.8,-0.8 -3.8,-1.2 M0,-1.5 C0.4,-6.2 6,-6.8 6,-3.2 C6,-1.6 4.8,-0.8 3.8,-1.2 M0,-1.5 V6.8" fill="none" stroke="currentColor" stroke-width="1.9"/></g>
<g transform="translate(65,302.84)" color="#808080"><path d="M1.5,-6.5 A3.8,3.8 0 1 0 1.5,1.4 A2.8,2.8 0 0 1 1.5,-6.5 M-0.8,1.2 V6.8 M-3.2,4.4 H1.6" fill="none" stroke="currentColor" stroke-width="1.65"/></g>
<g transform="translate(94,302.84) scale(1.08)" color="#804040"><circle cy="2.8" r="3.6" fill="none" stroke="currentColor" stroke-width="1.9"/><path d="M-5,-6.4 C-5,-2.4 -3.2,-1 0,-1 C3.2,-1 5,-2.4 5,-6.4" fill="none" stroke="currentColor" stroke-width="1.9"/></g>
<g transform="translate(65,319.51)" color="#000000"><circle r="5.6" fill="none" stroke="currentColor" stroke-width="2.01"/><path d="M-3.9,-3.9 L3.9,3.9 M3.9,-3.9 L-3.9,3.9" stroke="currentColor" stroke-width="2.01"/></g>
<g transform="translate(94,319.51) scale(1.08)" color="#ff0000"><path d="M-5.5,6 L5.5,-5 M0,-5.2 H5.6 V0.4 M-3.8,0.4 L0.4,4.6" fill="none" stroke="currentColor" stroke-width="2.01"/></g>
<text x="0" y="0" font-size="17.0" font-weight="bold" text-anchor="middle" transform="translate(65,342.38) scale(0.58,1)" fill="#000">As</text>
<g transform="translate(94,336.18) scale(1.08)" color="#804040"><path d="M-6.2,-3.6 V4.8 M-6.2,-2.6 Q-4.8,-5.4 -3.2,-3.6 V4.8 M-3.2,-2.6 Q-1.8,-5.4 -0.2,-3.6 V3.4 Q-0.2,6.2 -2,7.2 M-0.2,-1.4 Q2.6,-5.4 4.4,-3.2 Q5.6,-1 3.6,2.4 Q2,5 -0.6,6.4" fill="none" stroke="currentColor" stroke-width="1.7"/></g>
<text x="0" y="0" font-size="17.0" font-weight="bold" text-anchor="middle" transform="translate(65,359.05) scale(0.58,1)" fill="#000">Mc</text>
<g transform="translate(94,352.85) scale(1.08)" color="#804040"><circle cy="2.8" r="3.6" fill="none" stroke="currentColor" stroke-width="1.9"/><path d="M-5,-6.4 C-5,-2.4 -3.2,-1 0,-1 C3.2,-1 5,-2.4 5,-6.4" fill="none" stroke="currentColor" stroke-width="1.9"/></g>
<g><text x="1123.7" y="75.6" font-size="10.8" textLength="92.8" lengthAdjust="spacingAndGlyphs">03/02/2021, 18 : 56</text><text x="1123.7" y="88.1" font-size="10.8" textLength="92.8" lengthAdjust="spacingAndGlyphs">04/02/2022, 00 : 46</text><text x="1123.7" y="100.6" font-size="10.8" textLength="92.8" lengthAdjust="spacingAndGlyphs">04/02/2023, 06 : 37</text><text x="1123.7" y="113.1" font-size="10.8" textLength="92.8" lengthAdjust="spacingAndGlyphs">04/02/2024, 12 : 23</text><text x="1123.7" y="125.6" font-size="10.8" textLength="92.8" lengthAdjust="spacingAndGlyphs">03/02/2025, 18 : 08</text><text x="1123.7" y="138.1" font-size="10.8" textLength="92.8" lengthAdjust="spacingAndGlyphs">03/02/2026, 23 : 58</text><text x="1123.7" y="150.6" font-size="10.8" textLength="92.8" lengthAdjust="spacingAndGlyphs">04/02/2027, 05 : 40</text><text x="1123.7" y="163.1" font-size="10.8" textLength="92.8" lengthAdjust="spacingAndGlyphs">04/02/2028, 11 : 26</text><text x="1123.7" y="175.6" font-size="10.8" textLength="92.8" lengthAdjust="spacingAndGlyphs">03/02/2029, 17 : 18</text><text x="1123.7" y="188.1" font-size="10.8" textLength="92.8" lengthAdjust="spacingAndGlyphs">03/02/2030, 23 : 05</text><text x="1123.7" y="200.6" font-size="10.8" textLength="92.8" lengthAdjust="spacingAndGlyphs">04/02/2031, 04 : 52</text><text x="1123.7" y="213.1" font-size="10.8" textLength="92.8" lengthAdjust="spacingAndGlyphs">04/02/2032, 10 : 44</text><text x="1123.7" y="225.6" font-size="10.8" textLength="92.8" lengthAdjust="spacingAndGlyphs">03/02/2033, 16 : 39</text><text x="1123.7" y="238.1" font-size="10.8" textLength="92.8" lengthAdjust="spacingAndGlyphs">03/02/2034, 22 : 38</text><text x="1123.7" y="250.6" font-size="10.8" textLength="92.8" lengthAdjust="spacingAndGlyphs">04/02/2035, 04 : 26</text><text x="1123.7" y="263.1" font-size="10.8" textLength="92.8" lengthAdjust="spacingAndGlyphs">04/02/2036, 10 : 15</text><text x="1123.7" y="275.6" font-size="10.8" textLength="92.8" lengthAdjust="spacingAndGlyphs">03/02/2037, 16 : 09</text><text x="1123.7" y="288.1" font-size="10.8" textLength="92.8" lengthAdjust="spacingAndGlyphs">03/02/2038, 22 : 00</text><text x="1123.7" y="300.6" font-size="10.8" textLength="92.8" lengthAdjust="spacingAndGlyphs">04/02/2039, 03 : 47</text><text x="1123.7" y="313.1" font-size="10.8" textLength="92.8" lengthAdjust="spacingAndGlyphs">04/02/2040, 09 : 34</text><text x="1123.7" y="325.6" font-size="10.8" textLength="92.8" lengthAdjust="spacingAndGlyphs">03/02/2041, 15 : 22</text><text x="1123.7" y="338.1" font-size="10.8" textLength="92.8" lengthAdjust="spacingAndGlyphs">03/02/2042, 21 : 10</text><text x="1123.7" y="350.6" font-size="10.8" textLength="92.8" lengthAdjust="spacingAndGlyphs">04/02/2043, 02 : 53</text><text x="1123.7" y="363.1" font-size="10.8" textLength="92.8" lengthAdjust="spacingAndGlyphs">04/02/2044, 08 : 38</text><text x="1123.7" y="375.6" font-size="10.8" textLength="92.8" lengthAdjust="spacingAndGlyphs">03/02/2045, 14 : 33</text><text x="1123.7" y="388.1" font-size="10.8" textLength="92.8" lengthAdjust="spacingAndGlyphs">03/02/2046, 20 : 28</text><text x="1123.7" y="400.6" font-size="10.8" textLength="92.8" lengthAdjust="spacingAndGlyphs">04/02/2047, 02 : 13</text><text x="1123.7" y="413.1" font-size="10.8" textLength="92.8" lengthAdjust="spacingAndGlyphs">04/02/2048, 07 : 59</text><text x="1123.7" y="425.6" font-size="10.8" textLength="92.8" lengthAdjust="spacingAndGlyphs">03/02/2049, 13 : 50</text><text x="1123.7" y="438.1" font-size="10.8" textLength="92.8" lengthAdjust="spacingAndGlyphs">03/02/2050, 19 : 41</text><text x="1123.7" y="450.6" font-size="10.8" textLength="92.8" lengthAdjust="spacingAndGlyphs">04/02/2051, 01 : 31</text><text x="1123.7" y="463.1" font-size="10.8" textLength="92.8" lengthAdjust="spacingAndGlyphs">04/02/2052, 07 : 17</text><text x="1123.7" y="475.6" font-size="10.8" textLength="92.8" lengthAdjust="spacingAndGlyphs">03/02/2053, 13 : 09</text><text x="1123.7" y="488.1" font-size="10.8" textLength="92.8" lengthAdjust="spacingAndGlyphs">03/02/2054, 19 : 05</text><text x="1123.7" y="500.6" font-size="10.8" textLength="92.8" lengthAdjust="spacingAndGlyphs">04/02/2055, 00 : 51</text><text x="1123.7" y="513.1" font-size="10.8" textLength="92.8" lengthAdjust="spacingAndGlyphs">04/02/2056, 06 : 41</text><text x="1123.7" y="525.6" font-size="10.8" textLength="92.8" lengthAdjust="spacingAndGlyphs">03/02/2057, 12 : 38</text><text x="1123.7" y="538.1" font-size="10.8" textLength="92.8" lengthAdjust="spacingAndGlyphs">03/02/2058, 18 : 32</text><text x="1123.7" y="550.6" font-size="10.8" textLength="92.8" lengthAdjust="spacingAndGlyphs">04/02/2059, 00 : 20</text><text x="1123.7" y="563.1" font-size="10.8" textLength="92.8" lengthAdjust="spacingAndGlyphs">04/02/2060, 06 : 02</text><text x="1123.7" y="575.6" font-size="10.8" textLength="92.8" lengthAdjust="spacingAndGlyphs">03/02/2061, 11 : 49</text><text x="1123.7" y="588.1" font-size="10.8" textLength="92.8" lengthAdjust="spacingAndGlyphs">03/02/2062, 17 : 45</text><text x="1123.7" y="600.6" font-size="10.8" textLength="92.8" lengthAdjust="spacingAndGlyphs">03/02/2063, 23 : 28</text><text x="1123.7" y="613.1" font-size="10.8" textLength="92.8" lengthAdjust="spacingAndGlyphs">04/02/2064, 05 : 09</text><text x="1123.7" y="625.6" font-size="10.8" textLength="92.8" lengthAdjust="spacingAndGlyphs">03/02/2065, 10 : 59</text><text x="1123.7" y="638.1" font-size="10.8" textLength="92.8" lengthAdjust="spacingAndGlyphs">03/02/2066, 16 : 47</text><text x="1123.7" y="650.6" font-size="10.8" textLength="92.8" lengthAdjust="spacingAndGlyphs">03/02/2067, 22 : 34</text><text x="1123.7" y="663.1" font-size="10.8" textLength="92.8" lengthAdjust="spacingAndGlyphs">04/02/2068, 04 : 24</text><text x="1123.7" y="675.6" font-size="10.8" textLength="92.8" lengthAdjust="spacingAndGlyphs">03/02/2069, 10 : 16</text><text x="1123.7" y="688.1" font-size="10.8" textLength="92.8" lengthAdjust="spacingAndGlyphs">03/02/2070, 16 : 19</text><text x="1123.7" y="700.6" font-size="10.8" textLength="92.8" lengthAdjust="spacingAndGlyphs">03/02/2071, 22 : 08</text><text x="1123.7" y="713.1" font-size="10.8" textLength="92.8" lengthAdjust="spacingAndGlyphs">04/02/2072, 03 : 52</text><text x="1123.7" y="725.6" font-size="10.8" textLength="92.8" lengthAdjust="spacingAndGlyphs">03/02/2073, 09 : 48</text><text x="1123.7" y="738.1" font-size="10.8" textLength="92.8" lengthAdjust="spacingAndGlyphs">03/02/2074, 15 : 39</text><text x="1123.7" y="750.6" font-size="10.8" textLength="92.8" lengthAdjust="spacingAndGlyphs">03/02/2075, 21 : 28</text><text x="1123.7" y="763.1" font-size="10.8" textLength="92.8" lengthAdjust="spacingAndGlyphs">04/02/2076, 03 : 15</text><text x="1123.7" y="775.6" font-size="10.8" textLength="92.8" lengthAdjust="spacingAndGlyphs">03/02/2077, 08 : 58</text><text x="1123.7" y="788.1" font-size="10.8" textLength="92.8" lengthAdjust="spacingAndGlyphs">03/02/2078, 14 : 55</text><text x="1123.7" y="800.6" font-size="10.8" textLength="92.8" lengthAdjust="spacingAndGlyphs">03/02/2079, 20 : 41</text><text x="1123.7" y="813.1" font-size="10.8" textLength="92.8" lengthAdjust="spacingAndGlyphs">04/02/2080, 02 : 24</text><text x="1123.7" y="825.6" font-size="10.8" textLength="92.8" lengthAdjust="spacingAndGlyphs">03/02/2081, 08 : 21</text><text x="1123.7" y="838.1" font-size="10.8" textLength="92.8" lengthAdjust="spacingAndGlyphs">03/02/2082, 14 : 10</text><text x="1123.7" y="850.6" font-size="10.8" textLength="92.8" lengthAdjust="spacingAndGlyphs">03/02/2083, 19 : 57</text></g>
<g><text x="19.5" y="13.5" font-size="11" fill="#000" text-anchor="start" font-weight="normal" textLength="238.8" lengthAdjust="spacingAndGlyphs">Planetdance - [Flower Startup dirflowerdefault100.floe]</text><text x="25.6" y="30.9" font-size="10.8" fill="#000" text-anchor="start" font-weight="normal" textLength="14.6" lengthAdjust="spacingAndGlyphs">File</text><text x="52" y="30.9" font-size="10.8" fill="#000" text-anchor="start" font-weight="normal" textLength="160" lengthAdjust="spacingAndGlyphs">Lifetime Directions and Progressions</text><text x="224" y="30.9" font-size="10.8" fill="#000" text-anchor="start" font-weight="normal" textLength="21.5" lengthAdjust="spacingAndGlyphs">Time</text><text x="257" y="30.9" font-size="10.8" fill="#000" text-anchor="start" font-weight="normal" textLength="50.5" lengthAdjust="spacingAndGlyphs">Application</text><text x="319.5" y="30.9" font-size="10.8" fill="#000" text-anchor="start" font-weight="normal" textLength="34.5" lengthAdjust="spacingAndGlyphs">Options</text><text x="366" y="30.9" font-size="10.8" fill="#000" text-anchor="start" font-weight="normal" textLength="49" lengthAdjust="spacingAndGlyphs">Bookmarks</text><text x="426.5" y="30.9" font-size="10.8" fill="#000" text-anchor="start" font-weight="normal" textLength="37.0" lengthAdjust="spacingAndGlyphs">Window</text><text x="475" y="30.9" font-size="10.8" fill="#000" text-anchor="start" font-weight="normal" textLength="20.5" lengthAdjust="spacingAndGlyphs">Help</text><text x="25.5" y="49.3" font-size="10.8" fill="#000" text-anchor="start" font-weight="normal" textLength="43.5" lengthAdjust="spacingAndGlyphs"><tspan text-decoration="underline">1</tspan> Startup</text><text x="100.8" y="50" font-size="10.8" fill="#000" text-anchor="start" font-weight="normal" textLength="185.6" lengthAdjust="spacingAndGlyphs"><tspan text-decoration="underline">2</tspan> Lifetime Directions and Progressions</text><text x="25.3" y="82.2" font-size="12" fill="#000" text-anchor="start" font-weight="normal" textLength="38.6" lengthAdjust="spacingAndGlyphs">Startup</text><text x="120.6" y="107.3" font-size="11.8" fill="#000" text-anchor="start" font-weight="normal">15°05'</text><text x="120.6" y="123.97" font-size="11.8" fill="#000" text-anchor="start" font-weight="normal">02°02'</text><text x="120.6" y="140.64" font-size="11.8" fill="#000" text-anchor="start" font-weight="normal">24°58' r</text><text x="120.6" y="157.31" font-size="11.8" fill="#000" text-anchor="start" font-weight="normal">02°39'</text><text x="120.6" y="173.98" font-size="11.8" fill="#000" text-anchor="start" font-weight="normal">14°00'</text><text x="120.6" y="190.65" font-size="11.8" fill="#000" text-anchor="start" font-weight="normal">10°42'</text><text x="120.6" y="207.32" font-size="11.8" fill="#000" text-anchor="start" font-weight="normal">05°36'</text><text x="120.6" y="223.99" font-size="11.8" fill="#000" text-anchor="start" font-weight="normal">06°54'</text><text x="120.6" y="240.66" font-size="11.8" fill="#000" text-anchor="start" font-weight="normal">19°21'</text><text x="120.6" y="257.33" font-size="11.8" fill="#000" text-anchor="start" font-weight="normal">25°18'</text><text x="120.6" y="274" font-size="11.8" fill="#000" text-anchor="start" font-weight="normal">18°12' r</text><text x="120.6" y="290.67" font-size="11.8" fill="#000" text-anchor="start" font-weight="normal">06°01'</text><text x="120.6" y="307.34" font-size="11.8" fill="#000" text-anchor="start" font-weight="normal">11°44'</text><text x="120.6" y="324.01" font-size="11.8" fill="#000" text-anchor="start" font-weight="normal">20°17'</text><text x="120.6" y="340.68" font-size="11.8" fill="#000" text-anchor="start" font-weight="normal">07°14'</text><text x="120.6" y="357.35" font-size="11.8" fill="#000" text-anchor="start" font-weight="normal">25°31'</text><text x="240.1" y="81.6" font-size="10.8" fill="#000" text-anchor="start" font-weight="normal" textLength="21.8" lengthAdjust="spacingAndGlyphs">Year</text><text x="283" y="84" font-size="10.8" fill="#000" text-anchor="start" font-weight="normal" textLength="22" lengthAdjust="spacingAndGlyphs">2021</text><text x="288.8" y="110" font-size="10.8" fill="#000" text-anchor="start" font-weight="normal" textLength="44.6" lengthAdjust="spacingAndGlyphs">Calculate</text><text x="51.2" y="578.8" font-size="10.6" fill="#000" text-anchor="start" font-weight="normal">Solar Arc</text><text x="51.2" y="596.35" font-size="10.6" fill="#000" text-anchor="start" font-weight="normal">Solar Return</text><text x="51.2" y="613.9" font-size="10.6" fill="#000" text-anchor="start" font-weight="normal">Naibod Arc</text><text x="51.2" y="631.45" font-size="10.6" fill="#000" text-anchor="start" font-weight="normal">One-Degree</text><text x="51.2" y="649" font-size="10.6" fill="#000" text-anchor="start" font-weight="normal">Mean SA</text><text x="51.2" y="666.55" font-size="10.6" fill="#000" text-anchor="start" font-weight="normal">Secondary</text><text x="177.5" y="575" font-size="10.8" fill="#000" text-anchor="start" font-weight="normal" textLength="26.25" lengthAdjust="spacingAndGlyphs">Menu</text><text x="175.2" y="616.7" font-size="10.8" fill="#000" text-anchor="start" font-weight="normal" textLength="51" lengthAdjust="spacingAndGlyphs">Thick lines</text><text x="175.2" y="637.3" font-size="10.8" fill="#000" text-anchor="start" font-weight="normal" textLength="59.3" lengthAdjust="spacingAndGlyphs">Big symbols</text><text x="2.5" y="896.5" font-size="10.8" fill="#000" text-anchor="start" font-weight="normal" textLength="82" lengthAdjust="spacingAndGlyphs">14/02/2021 19:42</text><text x="204.5" y="896.5" font-size="10.8" fill="#000" text-anchor="start" font-weight="normal">1</text><text x="1354.4" y="896.5" font-size="10.8" fill="#000" text-anchor="start" font-weight="normal" textLength="54" lengthAdjust="spacingAndGlyphs">Mean Node</text><text x="1437" y="896.5" font-size="10.8" fill="#000" text-anchor="start" font-weight="normal" textLength="79" lengthAdjust="spacingAndGlyphs">Day / Night Pars</text><text x="1557" y="896.5" font-size="10.8" fill="#000" text-anchor="start" font-weight="normal" textLength="38.5" lengthAdjust="spacingAndGlyphs">Parallax</text></g>
</svg>
</body></html>
